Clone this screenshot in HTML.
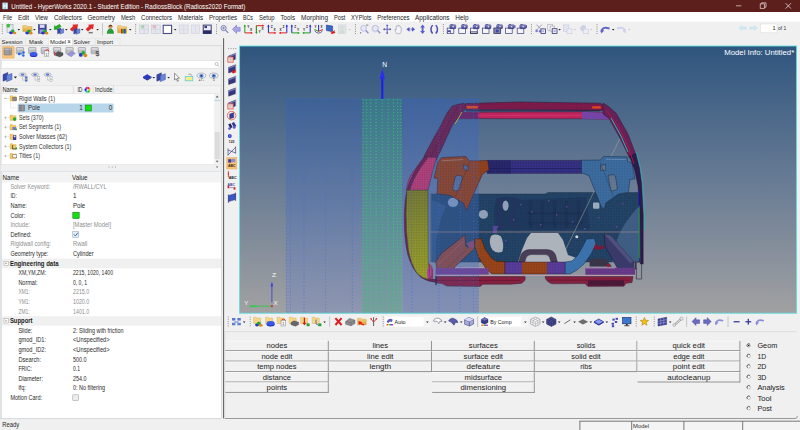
<!DOCTYPE html>
<html lang="en">
<head>
<meta charset="utf-8">
<title>Untitled - HyperWorks 2020.1 - Student Edition - RadiossBlock (Radioss2020 Format)</title>
<style>
html,body{margin:0;padding:0;background:#f0f0f0;overflow:hidden;}
body{width:800px;height:430px;font-family:"Liberation Sans",sans-serif;}
svg{display:block;font-family:"Liberation Sans",sans-serif;}
svg text{white-space:pre;}
</style>
</head>
<body>
<svg width="800" height="430" viewBox="0 0 800 430">
<defs>
<linearGradient id="vpbg" x1="0" y1="0" x2="0" y2="1"><stop offset="0" stop-color="#2f557e"/><stop offset="0.5" stop-color="#677b94"/><stop offset="1" stop-color="#a1a1a2"/></linearGradient>
<linearGradient id="wallg" x1="0" y1="0" x2="0" y2="1"><stop offset="0" stop-color="#3a5f9c"/><stop offset="0.5" stop-color="#5a77ad"/><stop offset="1" stop-color="#8490b9"/></linearGradient>
<linearGradient id="cylg" x1="0" y1="0" x2="0" y2="1"><stop offset="0" stop-color="#3a8a84"/><stop offset="0.5" stop-color="#4f9c8c"/><stop offset="1" stop-color="#62a68e"/></linearGradient>
<linearGradient id="fold" x1="0" y1="0" x2="0" y2="1"><stop offset="0" stop-color="#f7d88a"/><stop offset="1" stop-color="#e0a030"/></linearGradient>
<linearGradient id="blu" x1="0" y1="0" x2="1" y2="1"><stop offset="0" stop-color="#8a90d8"/><stop offset="1" stop-color="#2a2f8a"/></linearGradient>
<linearGradient id="cam" x1="0" y1="0" x2="0" y2="1"><stop offset="0" stop-color="#9a9cd8"/><stop offset="1" stop-color="#34388a"/></linearGradient>
<pattern id="mesh" width="1.6" height="1.6" patternUnits="userSpaceOnUse"><path d="M0 0H1.6M0 0V1.6" stroke="#000" stroke-width="0.4" opacity="0.4"/></pattern>
<pattern id="meshl" width="1.8" height="1.8" patternUnits="userSpaceOnUse"><path d="M0 0H1.8M0 0V1.8" stroke="#fff" stroke-width="0.35" opacity="0.35"/></pattern>
</defs>
<rect x="0" y="0" width="800" height="430" fill="#f0f0f0" />
<rect x="0" y="0" width="800" height="12" fill="#5c1f1b" />
<rect x="2.2" y="2.6" width="5.8" height="6.6" fill="#9cc4e4" rx="0.8" />
<rect x="3.3" y="3.2" width="1" height="5.4" fill="#ffffff" />
<rect x="5.9" y="3.2" width="1" height="5.4" fill="#ffffff" />
<rect x="3.3" y="5.3" width="3.6" height="1.1" fill="#ffffff" />
<text x="11.3" y="8.58" font-size="7.3" fill="#ffffff" textLength="234" lengthAdjust="spacingAndGlyphs">Untitled - HyperWorks 2020.1 - Student Edition - RadiossBlock (Radioss2020 Format)</text>
<line x1="736" y1="5.8" x2="741.4" y2="5.8" stroke="#e8dcdc" stroke-width="0.7" />
<rect x="760.2" y="3.9" width="4.4" height="4.4" fill="none" stroke="#e8dcdc" stroke-width="0.7" />
<path d="M761.6 3.9V2.8H766V7.2H764.6" fill="none" stroke="#e8dcdc" stroke-width="0.7" />
<path d="M785.6 3.2L791 8.6M791 3.2L785.6 8.6" fill="none" stroke="#f0e6e6" stroke-width="0.75" />
<rect x="0" y="12" width="800" height="9.7" fill="#ffffff" />
<text x="3" y="19.58" font-size="6.4" fill="#1c1c1c" textLength="9" lengthAdjust="spacingAndGlyphs">File</text>
<text x="18" y="19.58" font-size="6.4" fill="#1c1c1c" textLength="11" lengthAdjust="spacingAndGlyphs">Edit</text>
<text x="35" y="19.58" font-size="6.4" fill="#1c1c1c" textLength="13" lengthAdjust="spacingAndGlyphs">View</text>
<text x="54" y="19.58" font-size="6.4" fill="#1c1c1c" textLength="28" lengthAdjust="spacingAndGlyphs">Collectors</text>
<text x="87.5" y="19.58" font-size="6.4" fill="#1c1c1c" textLength="27.5" lengthAdjust="spacingAndGlyphs">Geometry</text>
<text x="121" y="19.58" font-size="6.4" fill="#1c1c1c" textLength="14.3" lengthAdjust="spacingAndGlyphs">Mesh</text>
<text x="141" y="19.58" font-size="6.4" fill="#1c1c1c" textLength="31" lengthAdjust="spacingAndGlyphs">Connectors</text>
<text x="178" y="19.58" font-size="6.4" fill="#1c1c1c" textLength="25" lengthAdjust="spacingAndGlyphs">Materials</text>
<text x="209" y="19.58" font-size="6.4" fill="#1c1c1c" textLength="28.2" lengthAdjust="spacingAndGlyphs">Properties</text>
<text x="243" y="19.58" font-size="6.4" fill="#1c1c1c" textLength="10" lengthAdjust="spacingAndGlyphs">BCs</text>
<text x="259" y="19.58" font-size="6.4" fill="#1c1c1c" textLength="15.5" lengthAdjust="spacingAndGlyphs">Setup</text>
<text x="280.5" y="19.58" font-size="6.4" fill="#1c1c1c" textLength="14.5" lengthAdjust="spacingAndGlyphs">Tools</text>
<text x="301" y="19.58" font-size="6.4" fill="#1c1c1c" textLength="27" lengthAdjust="spacingAndGlyphs">Morphing</text>
<text x="334" y="19.58" font-size="6.4" fill="#1c1c1c" textLength="11.3" lengthAdjust="spacingAndGlyphs">Post</text>
<text x="351" y="19.58" font-size="6.4" fill="#1c1c1c" textLength="20.5" lengthAdjust="spacingAndGlyphs">XYPlots</text>
<text x="377.3" y="19.58" font-size="6.4" fill="#1c1c1c" textLength="32.2" lengthAdjust="spacingAndGlyphs">Preferences</text>
<text x="415" y="19.58" font-size="6.4" fill="#1c1c1c" textLength="34.5" lengthAdjust="spacingAndGlyphs">Applications</text>
<text x="455.3" y="19.58" font-size="6.4" fill="#1c1c1c" textLength="13.2" lengthAdjust="spacingAndGlyphs">Help</text>
<rect x="1.85" y="24.2" width="0.9" height="0.9" fill="#7a7a7a" />
<rect x="1.85" y="26.4" width="0.9" height="0.9" fill="#7a7a7a" />
<rect x="1.85" y="28.6" width="0.9" height="0.9" fill="#7a7a7a" />
<rect x="1.85" y="30.8" width="0.9" height="0.9" fill="#7a7a7a" />
<rect x="1.85" y="33" width="0.9" height="0.9" fill="#7a7a7a" />
<rect x="7" y="24.7" width="6" height="8" fill="#e6e8f2" stroke="#8890a8" stroke-width="0.5" />
<circle cx="8.3" cy="25.7" r="1.9" fill="#3cc03c"/>
<ellipse cx="11.015" cy="32.8" rx="1.955" ry="1.445" fill="#2238c8"/>
<ellipse cx="14.5" cy="33" rx="1.87" ry="1.36" fill="#d88a18"/>
<ellipse cx="12.715" cy="30.9" rx="1.87" ry="1.36" fill="#22a832"/>
<polygon points="17.5,28.95 20.1,28.95 18.8,30.51" fill="#222" />
<path d="M22.8 25.6h3.6799999999999997l1 1h4.52v5h-9.2z" fill="url(#fold)" stroke="#c8922a" stroke-width="0.4" />
<ellipse cx="27.215" cy="33" rx="1.955" ry="1.445" fill="#2238c8"/>
<ellipse cx="30.7" cy="33.2" rx="1.87" ry="1.36" fill="#d88a18"/>
<ellipse cx="28.915" cy="31.1" rx="1.87" ry="1.36" fill="#22a832"/>
<polygon points="33.1,28.95 35.7,28.95 34.4,30.51" fill="#222" />
<rect x="38.4" y="24.7" width="7.8" height="8.6" fill="#3c3f96" stroke="#22246a" stroke-width="0.4" />
<rect x="39.8" y="24.7" width="4.8" height="3.2" fill="#d8dcf2" />
<rect x="39.6" y="29.5" width="5.4" height="3.6" fill="#9a9edc" />
<ellipse cx="43.015" cy="33" rx="1.955" ry="1.445" fill="#2238c8"/>
<ellipse cx="46.5" cy="33.2" rx="1.87" ry="1.36" fill="#d88a18"/>
<ellipse cx="44.715" cy="31.1" rx="1.87" ry="1.36" fill="#22a832"/>
<polygon points="49,28.95 51.6,28.95 50.3,30.51" fill="#222" />
<polygon points="53.8,29.7 54.4,25.1 55.8,26.3 59.4,24.1 61.6,26.5 58.2,28.5 59.4,29.7" fill="#2aa82a" />
<g>
<polygon points="57.6,29.36 60.82,27.96 60.82,32.58 57.6,33.84" fill="#3a48a8" stroke="#222a78" stroke-width="0.4" />
<polygon points="59.98,29.92 63.62,28.66 63.62,32.72 59.98,34.12" fill="#6a86d8" stroke="#2a3a98" stroke-width="0.4" />
</g>
<polygon points="65,28.95 67.6,28.95 66.3,30.51" fill="#222" />
<polygon points="69.8,29.2 73.2,26 72.2,24.8 78,24.2 77.2,29.6 75.8,28.4 72.2,31.6" fill="#e02a2a" />
<g>
<polygon points="73.8,29.56 77.02,28.16 77.02,32.78 73.8,34.04" fill="#3a48a8" stroke="#222a78" stroke-width="0.4" />
<polygon points="76.18,30.12 79.82,28.86 79.82,32.92 76.18,34.32" fill="#6a86d8" stroke="#2a3a98" stroke-width="0.4" />
</g>
<polygon points="80.9,28.95 83.5,28.95 82.2,30.51" fill="#222" />
<polygon points="85.6,29.2 89,26 88,24.8 93.8,24.2 93,29.6 91.6,28.4 88,31.6" fill="#e02a2a" />
<rect x="88.6" y="31.9" width="4.2" height="1.5" fill="#7a7a7a" />
<polygon points="96.3,28.95 98.9,28.95 97.6,30.51" fill="#222" />
<line x1="102.5" y1="23.3" x2="102.5" y2="35.4" stroke="#a8a8a8" stroke-width="0.6" />
<circle cx="110.4" cy="26.9" r="2.1" fill="#d09a6a"/>
<path d="M106.8 33.7q0.2 -5 3.6 -5q3.4 0 3.6 5z" fill="#2a9a3a" />
<path d="M108.6 26.3q1.8 -2.6 3.8 0" fill="#5a3418" stroke="#5a3418" stroke-width="0.6" />
<path d="M117.6 25.7h3.6l1 1h4.3999999999999995v6h-9z" fill="url(#fold)" stroke="#c8922a" stroke-width="0.4" />
<rect x="121" y="28.9" width="1.6" height="4.6" fill="#e02020" />
<rect x="122.6" y="28.9" width="1.6" height="4.6" fill="#20b020" />
<rect x="124.2" y="28.9" width="1.6" height="4.6" fill="#2030d0" />
<rect x="125.8" y="28.9" width="1.2" height="4.6" fill="#e0c020" />
<polygon points="128.9,28.95 131.5,28.95 130.2,30.51" fill="#222" />
<rect x="135.25" y="24.2" width="0.9" height="0.9" fill="#7a7a7a" />
<rect x="135.25" y="26.4" width="0.9" height="0.9" fill="#7a7a7a" />
<rect x="135.25" y="28.6" width="0.9" height="0.9" fill="#7a7a7a" />
<rect x="135.25" y="30.8" width="0.9" height="0.9" fill="#7a7a7a" />
<rect x="135.25" y="33" width="0.9" height="0.9" fill="#7a7a7a" />
<rect x="139.6" y="25" width="9" height="8.6" fill="#e6e7ee" stroke="#c4c8d4" stroke-width="0.6" opacity="1" />
<line x1="144.1" y1="25" x2="144.1" y2="33.6" stroke="#c4c8d4" stroke-width="0.5" />
<line x1="139.6" y1="29.3" x2="148.6" y2="29.3" stroke="#c4c8d4" stroke-width="0.5" />
<rect x="141" y="25.3" width="3" height="3" fill="#78c878" opacity="0.55" />
<rect x="151.2" y="25" width="9" height="8.6" fill="#e6e7ee" stroke="#c4c8d4" stroke-width="0.6" opacity="1" />
<line x1="155.7" y1="25" x2="155.7" y2="33.6" stroke="#c4c8d4" stroke-width="0.5" />
<line x1="151.2" y1="29.3" x2="160.2" y2="29.3" stroke="#c4c8d4" stroke-width="0.5" />
<rect x="152.6" y="25.3" width="3" height="3" fill="#e88a8a" opacity="0.55" />
<rect x="163.2" y="25.3" width="8.4" height="8.2" fill="#ffffff" stroke="#4a4c86" stroke-width="1.1" />
<polygon points="173.9,28.95 176.5,28.95 175.2,30.51" fill="#222" />
<rect x="179.2" y="25" width="9" height="8.6" fill="#e6e7ee" stroke="#cdd0dc" stroke-width="0.6" opacity="1" />
<line x1="183.7" y1="25" x2="183.7" y2="33.6" stroke="#cdd0dc" stroke-width="0.5" />
<line x1="179.2" y1="29.3" x2="188.2" y2="29.3" stroke="#cdd0dc" stroke-width="0.5" />
<rect x="191.2" y="25" width="8.4" height="8.6" fill="#e6e7ee" stroke="#cdd0dc" stroke-width="0.6" />
<line x1="195.4" y1="25" x2="195.4" y2="33.6" stroke="#cdd0dc" stroke-width="0.5" />
<rect x="203.2" y="25.1" width="8" height="8.4" fill="#e8eaf4" stroke="#2a2c66" stroke-width="0.9" />
<rect x="203.2" y="30.3" width="8" height="3.2" fill="#2a2c66" />
<rect x="204.4" y="25.9" width="2.6" height="2.2" fill="#3a3c7a" />
<rect x="216.05" y="24.2" width="0.9" height="0.9" fill="#7a7a7a" />
<rect x="216.05" y="26.4" width="0.9" height="0.9" fill="#7a7a7a" />
<rect x="216.05" y="28.6" width="0.9" height="0.9" fill="#7a7a7a" />
<rect x="216.05" y="30.8" width="0.9" height="0.9" fill="#7a7a7a" />
<rect x="216.05" y="33" width="0.9" height="0.9" fill="#7a7a7a" />
<circle cx="223.6" cy="28.1" r="2.6" fill="#dfe2f2" stroke="#6a6eae" stroke-width="0.8"/>
<line x1="225.6" y1="30.1" x2="228.2" y2="32.9" stroke="#7a7ec0" stroke-width="1.2" />
<path d="M222.3 28.1h2.6M223.6 26.8v2.6" fill="none" stroke="#4a4e96" stroke-width="0.5" />
<polygon points="232.4,29.3 236.6,25.1 236.6,27.4 240.2,27.4 240.2,31.2 236.6,31.2 236.6,33.5" fill="#a8a6e6" stroke="#6a68c0" stroke-width="0.5" />
<line x1="244.8" y1="32.9" x2="244.8" y2="25.5" stroke="#20a020" stroke-width="1" />
<polygon points="244.8,24.5 243.6,26.5 246,26.5" fill="#20a020" />
<line x1="244.8" y1="32.9" x2="251.8" y2="32.9" stroke="#e02020" stroke-width="1" />
<polygon points="252.8,32.9 250.8,31.7 250.8,34.1" fill="#e02020" />
<text x="247.2" y="27.79" font-size="3.2" fill="#222" font-weight="bold">Y</text>
<text x="250" y="31.39" font-size="3.2" fill="#222" font-weight="bold">X</text>
<path d="M256.4 31.900000000000002V25.7H263" fill="none" stroke="#e02020" stroke-width="1" />
<polygon points="264.4,25.7 262.4,24.5 262.4,26.9" fill="#e02020" />
<polygon points="256.4,34.1 255.2,31.9 257.6,31.9" fill="#20a020" />
<line x1="256.4" y1="25.7" x2="256.4" y2="32.3" stroke="#20a020" stroke-width="1" />
<text x="261.4" y="29.79" font-size="3.2" fill="#222" font-weight="bold">X</text>
<text x="258.6" y="33.39" font-size="3.2" fill="#222" font-weight="bold">Y</text>
<line x1="268.4" y1="32.9" x2="268.4" y2="25.5" stroke="#2020e0" stroke-width="1" />
<polygon points="268.4,24.5 267.2,26.5 269.6,26.5" fill="#2020e0" />
<line x1="268.4" y1="32.9" x2="275.4" y2="32.9" stroke="#e02020" stroke-width="1" />
<polygon points="276.4,32.9 274.4,31.7 274.4,34.1" fill="#e02020" />
<text x="270.8" y="27.79" font-size="3.2" fill="#222" font-weight="bold">Z</text>
<text x="273.6" y="31.39" font-size="3.2" fill="#222" font-weight="bold">X</text>
<line x1="286.8" y1="32.9" x2="286.8" y2="25.5" stroke="#2020e0" stroke-width="1" />
<polygon points="286.8,24.5 285.6,26.5 288,26.5" fill="#2020e0" />
<line x1="286.8" y1="32.9" x2="279.8" y2="32.9" stroke="#e02020" stroke-width="1" />
<polygon points="278.8,32.9 280.8,31.7 280.8,34.1" fill="#e02020" />
<text x="282.6" y="27.79" font-size="3.2" fill="#222" font-weight="bold">Z</text>
<text x="279.6" y="31.39" font-size="3.2" fill="#222" font-weight="bold">X</text>
<line x1="291.8" y1="32.9" x2="291.8" y2="25.5" stroke="#2020e0" stroke-width="1" />
<polygon points="291.8,24.5 290.6,26.5 293,26.5" fill="#2020e0" />
<line x1="291.8" y1="32.9" x2="298.8" y2="32.9" stroke="#20a020" stroke-width="1" />
<polygon points="299.8,32.9 297.8,31.7 297.8,34.1" fill="#20a020" />
<text x="294.2" y="27.79" font-size="3.2" fill="#222" font-weight="bold">Z</text>
<text x="297" y="31.39" font-size="3.2" fill="#222" font-weight="bold">Y</text>
<line x1="310.2" y1="32.9" x2="310.2" y2="25.5" stroke="#2020e0" stroke-width="1" />
<polygon points="310.2,24.5 309,26.5 311.4,26.5" fill="#2020e0" />
<line x1="310.2" y1="32.9" x2="303.2" y2="32.9" stroke="#20a020" stroke-width="1" />
<polygon points="302.2,32.9 304.2,31.7 304.2,34.1" fill="#20a020" />
<text x="306" y="27.79" font-size="3.2" fill="#222" font-weight="bold">Z</text>
<text x="303" y="31.39" font-size="3.2" fill="#222" font-weight="bold">Y</text>
<line x1="318.6" y1="24.9" x2="318.6" y2="31.3" stroke="#2020e0" stroke-width="1" />
<line x1="318.6" y1="31.3" x2="314.4" y2="29.5" stroke="#20a020" stroke-width="1" />
<line x1="318.6" y1="31.3" x2="322.8" y2="29.5" stroke="#e02020" stroke-width="1" />
<path d="M314.6 30.900000000000002q4 4.4 8 0" fill="none" stroke="#22226a" stroke-width="0.7" />
<text x="314.6" y="27.72" font-size="3" fill="#222" font-weight="bold">Y</text>
<text x="320.6" y="27.72" font-size="3" fill="#222" font-weight="bold">X</text>
<polygon points="326.4,25.1 332.6,26.1 332.6,31.7 326.4,30.5" fill="#3a68c8" stroke="#1a2a7a" stroke-width="0.5" />
<polygon points="330.4,33.1 335.2,29.9 334.4,31.7 335.6,32.7 332,33.9" fill="#e01818" />
<rect x="338.2" y="24.9" width="7.8" height="8.8" fill="#dfe3ea" stroke="#cfd4dc" stroke-width="0.5" />
<circle cx="342" cy="27.9" r="1.6" fill="#cfe0cf"/>
<path d="M339.4 33.3q0.4 -3.6 2.6 -3.6q2.2 0 2.6 3.6z" fill="#cfe0cf" />
<polygon points="348.6,29.1 350.6,29.1 349.6,30.3" fill="#b8b8b8" />
<rect x="354.95" y="24.2" width="0.9" height="0.9" fill="#7a7a7a" />
<rect x="354.95" y="26.4" width="0.9" height="0.9" fill="#7a7a7a" />
<rect x="354.95" y="28.6" width="0.9" height="0.9" fill="#7a7a7a" />
<rect x="354.95" y="30.8" width="0.9" height="0.9" fill="#7a7a7a" />
<rect x="354.95" y="33" width="0.9" height="0.9" fill="#7a7a7a" />
<circle cx="363.6" cy="28.3" r="2.9" fill="#e6e8f6" stroke="#b9bbe2" stroke-width="0.9"/>
<line x1="365.8" y1="30.5" x2="368.4" y2="33.3" stroke="#8c8ed0" stroke-width="1.3" />
<polygon points="360,32.5 361.4,32.5 360.7,33.7" fill="#222" />
<line x1="366" y1="25.1" x2="368.4" y2="25.1" stroke="#444" stroke-width="0.6" />
<circle cx="375" cy="28.7" r="3.4" fill="none" stroke="#c4c6dc" stroke-width="0.6"/>
<circle cx="375.4" cy="28.3" r="2.9" fill="#e6e8f6" stroke="#b9bbe2" stroke-width="0.9"/>
<line x1="377.6" y1="30.5" x2="380.2" y2="33.3" stroke="#8c8ed0" stroke-width="1.3" />
<path d="M383.4 29.3H391M387.2 24.9V33.7" fill="none" stroke="#5a5cb8" stroke-width="0.9" />
<polygon points="387.2,24.3 386,26.1 388.4,26.1" fill="#5a5cb8" />
<polygon points="387.2,34.3 386,32.5 388.4,32.5" fill="#5a5cb8" />
<polygon points="383,29.3 384.8,28.1 384.8,30.5" fill="#5a5cb8" />
<polygon points="391.4,29.3 389.6,28.1 389.6,30.5" fill="#5a5cb8" />
<path d="M396.6 33.7q-1.8 -2.6 -1.6 -4.6l1.2 0.6v-3.4q0.6 -0.8 1.2 0v-0.8q0.7 -0.8 1.3 0v0.6q0.7 -0.7 1.3 0.1v1q0.7 -0.5 1.2 0.3v3.4q0 1.6 -1 2.8z" fill="#f4f4f8" stroke="#8a8ca6" stroke-width="0.55" />
<polygon points="406.4,29.3 409.4,26.9 409.4,28.4 412,28.4 412,26.9 415.2,29.3 412,31.7 412,30.2 409.4,30.2 409.4,31.7" fill="#5a5cc4" />
<circle cx="410.6" cy="29.3" r="1" fill="#d8d8f4"/>
<polygon points="422.6,24.5 425,27.5 423.5,27.5 423.5,31.1 425,31.1 422.6,34.1 420.2,31.1 421.7,31.1 421.7,27.5 420.2,27.5" fill="#5a5cc4" />
<path d="M432.6 25.1q-3.4 4.2 0 8.4" fill="none" stroke="#4a4cb4" stroke-width="1.5" />
<path d="M435.8 25.1q3.4 4.2 0 8.4" fill="none" stroke="#4a4cb4" stroke-width="1.5" />
<rect x="442.95" y="24.2" width="0.9" height="0.9" fill="#7a7a7a" />
<rect x="442.95" y="26.4" width="0.9" height="0.9" fill="#7a7a7a" />
<rect x="442.95" y="28.6" width="0.9" height="0.9" fill="#7a7a7a" />
<rect x="442.95" y="30.8" width="0.9" height="0.9" fill="#7a7a7a" />
<rect x="442.95" y="33" width="0.9" height="0.9" fill="#7a7a7a" />
<rect x="447.2" y="28.1" width="6.6" height="5.4" fill="#f4f4fa" stroke="#3c3e78" stroke-width="0.7" />
<rect x="449.8" y="24.7" width="6" height="4" fill="url(#cam)" stroke="#34367c" stroke-width="0.4" rx="0.8" />
<circle cx="453.2" cy="26.7" r="1.15" fill="#e4e4f8" stroke="#2a2c6a" stroke-width="0.4"/>
<rect x="450.6" y="24" width="2" height="1" fill="#5a5ca8" />
<rect x="447.4" y="30.3" width="3.4" height="3.2" fill="#3c3e9a" />
<rect x="448.1" y="31.9" width="2" height="1.4" fill="#e8e8f8" />
<rect x="458.8" y="28.1" width="6.6" height="5.4" fill="#f4f4fa" stroke="#3c3e78" stroke-width="0.7" />
<rect x="461.4" y="24.7" width="6" height="4" fill="url(#cam)" stroke="#34367c" stroke-width="0.4" rx="0.8" />
<circle cx="464.8" cy="26.7" r="1.15" fill="#e4e4f8" stroke="#2a2c6a" stroke-width="0.4"/>
<rect x="462.2" y="24" width="2" height="1" fill="#5a5ca8" />
<rect x="470.6" y="28.1" width="6.6" height="5.4" fill="#f4f4fa" stroke="#3c3e78" stroke-width="0.7" />
<rect x="473.2" y="24.7" width="6" height="4" fill="url(#cam)" stroke="#34367c" stroke-width="0.4" rx="0.8" />
<circle cx="476.6" cy="26.7" r="1.15" fill="#e4e4f8" stroke="#2a2c6a" stroke-width="0.4"/>
<rect x="474" y="24" width="2" height="1" fill="#5a5ca8" />
<rect x="470.6" y="31.9" width="6.6" height="1.6" fill="#f4f4fa" stroke="#22244a" stroke-width="0.8" />
<rect x="482.4" y="28.1" width="6.6" height="5.4" fill="#f4f4fa" stroke="#3c3e78" stroke-width="0.7" />
<rect x="485" y="24.7" width="6" height="4" fill="url(#cam)" stroke="#34367c" stroke-width="0.4" rx="0.8" />
<circle cx="488.4" cy="26.7" r="1.15" fill="#e4e4f8" stroke="#2a2c6a" stroke-width="0.4"/>
<rect x="485.8" y="24" width="2" height="1" fill="#5a5ca8" />
<rect x="494" y="28.1" width="6.6" height="5.4" fill="#f4f4fa" stroke="#3c3e78" stroke-width="0.7" />
<rect x="496.6" y="24.7" width="6" height="4" fill="url(#cam)" stroke="#34367c" stroke-width="0.4" rx="0.8" />
<circle cx="500" cy="26.7" r="1.15" fill="#e4e4f8" stroke="#2a2c6a" stroke-width="0.4"/>
<rect x="497.4" y="24" width="2" height="1" fill="#5a5ca8" />
<rect x="494" y="28.1" width="6.6" height="5.4" fill="#8a8ca8" stroke="#3c3e78" stroke-width="0.7" />
<circle cx="497.3" cy="30.9" r="1.6" fill="#3a48b8"/>
<rect x="505.6" y="28.1" width="6.6" height="5.4" fill="#f4f4fa" stroke="#3c3e78" stroke-width="0.7" />
<rect x="508.2" y="24.7" width="6" height="4" fill="url(#cam)" stroke="#34367c" stroke-width="0.4" rx="0.8" />
<circle cx="511.6" cy="26.7" r="1.15" fill="#e4e4f8" stroke="#2a2c6a" stroke-width="0.4"/>
<rect x="509" y="24" width="2" height="1" fill="#5a5ca8" />
<polygon points="514.2,25.7 515.4,24.9 515.4,28.3 514.2,27.5" fill="#4a4c98" />
<rect x="517.2" y="28.1" width="6.6" height="5.4" fill="#f4f4fa" stroke="#3c3e78" stroke-width="0.7" />
<rect x="519.8" y="24.7" width="6" height="4" fill="url(#cam)" stroke="#34367c" stroke-width="0.4" rx="0.8" />
<circle cx="523.2" cy="26.7" r="1.15" fill="#e4e4f8" stroke="#2a2c6a" stroke-width="0.4"/>
<rect x="520.6" y="24" width="2" height="1" fill="#5a5ca8" />
<polygon points="525.8,25.7 527,24.9 527,28.3 525.8,27.5" fill="#4a4c98" />
<rect x="530.95" y="24.2" width="0.9" height="0.9" fill="#7a7a7a" />
<rect x="530.95" y="26.4" width="0.9" height="0.9" fill="#7a7a7a" />
<rect x="530.95" y="28.6" width="0.9" height="0.9" fill="#7a7a7a" />
<rect x="530.95" y="30.8" width="0.9" height="0.9" fill="#7a7a7a" />
<rect x="530.95" y="33" width="0.9" height="0.9" fill="#7a7a7a" />
<path d="M536.6 24.700000000000003L541.6 29.900000000000002M541.8 24.700000000000003L536.8 29.900000000000002" fill="none" stroke="#9a9cb6" stroke-width="0.9" />
<circle cx="536.6" cy="30.9" r="1.3" fill="#7a7cd0"/>
<circle cx="540" cy="31.3" r="1.2" fill="#7a7cd0"/>
<rect x="541" y="28.9" width="4.4" height="4.6" fill="#f0f0fa" stroke="#34366e" stroke-width="0.8" />
<rect x="542.4" y="30.3" width="1.8" height="1.8" fill="#a8aae0" />
<rect x="547.8" y="24.5" width="4.6" height="6" fill="#f4f4f8" stroke="#9a9ca8" stroke-width="0.5" />
<rect x="550" y="26.1" width="4.2" height="5" fill="#f4f4f8" stroke="#8a8c98" stroke-width="0.5" />
<rect x="552.2" y="28.7" width="4.8" height="4.8" fill="#f0f0fa" stroke="#34366e" stroke-width="0.8" />
<rect x="553.6" y="30.1" width="2" height="2" fill="#a8aae0" />
<polygon points="558.3,28.95 560.9,28.95 559.6,30.51" fill="#222" />
<rect x="563.4" y="24.9" width="5.4" height="6.4" fill="#e2e4f0" stroke="#c8cade" stroke-width="0.6" />
<rect x="567" y="28.9" width="5" height="4.8" fill="#eceef6" stroke="#c8cade" stroke-width="0.6" />
<polygon points="574.2,29.1 576.2,29.1 575.2,30.3" fill="#bcbcbc" />
<path d="M579.6 27.7l3.4 -3 3 1.2 -0.4 4 -4 1.6z" fill="#cfd1e4" />
<rect x="583.4" y="29.1" width="5" height="4.6" fill="#eceef6" stroke="#c8cade" stroke-width="0.6" />
<polygon points="590.2,29.1 592.2,29.1 591.2,30.3" fill="#bcbcbc" />
<rect x="596.55" y="24.2" width="0.9" height="0.9" fill="#7a7a7a" />
<rect x="596.55" y="26.4" width="0.9" height="0.9" fill="#7a7a7a" />
<rect x="596.55" y="28.6" width="0.9" height="0.9" fill="#7a7a7a" />
<rect x="596.55" y="30.8" width="0.9" height="0.9" fill="#7a7a7a" />
<rect x="596.55" y="33" width="0.9" height="0.9" fill="#7a7a7a" />
<path d="M601.4 32.1q0.4 -6.4 8.2 -3.4" fill="none" stroke="#6466c4" stroke-width="1.8" />
<polygon points="600.6,29.5 604.4,30.5 601.2,33.5" fill="#6466c4" />
<polygon points="611.9,28.95 614.5,28.95 613.2,30.51" fill="#222" />
<path d="M625.2 32.1q-0.4 -6.4 -8.2 -3.4" fill="none" stroke="#d2d3ec" stroke-width="1.8" />
<polygon points="626,29.5 622.2,30.5 625.4,33.5" fill="#d2d3ec" />
<polygon points="628.2,29.1 630.2,29.1 629.2,30.3" fill="#bcbcbc" />
<polygon points="738.2,28.1 742.2,25.1 742.2,26.7 746.8,26.7 746.8,29.5 742.2,29.5 742.2,31.1" fill="#cfe6ee" />
<polygon points="758,28.1 754,25.1 754,26.7 749.4,26.7 749.4,29.5 754,29.5 754,31.1" fill="#cfe6ee" />
<rect x="760.4" y="24" width="16.6" height="8.8" fill="#ffffff" stroke="#dcdcdc" stroke-width="0.6" />
<text x="775.6" y="30.40" font-size="5.6" fill="#222" text-anchor="end">1</text>
<text x="778" y="30.34" font-size="5.4" fill="#333" textLength="8.4" lengthAdjust="spacingAndGlyphs">of 1</text>
<rect x="0" y="38.2" width="25.5" height="7.4" fill="#f0f0f0" stroke="#e0e0e0" stroke-width="0.5" />
<text x="1.5" y="44.01" font-size="6.2" fill="#1e1e1e" textLength="21" lengthAdjust="spacingAndGlyphs">Session</text>
<rect x="25.5" y="38.2" width="23.3" height="7.4" fill="#f0f0f0" stroke="#e0e0e0" stroke-width="0.5" />
<text x="29" y="44.01" font-size="6.2" fill="#1e1e1e" textLength="14" lengthAdjust="spacingAndGlyphs">Mask</text>
<rect x="48.8" y="38.2" width="23.8" height="7.4" fill="#ffffff" stroke="#e0e0e0" stroke-width="0.5" />
<text x="50" y="44.01" font-size="6.2" fill="#1e1e1e" textLength="16" lengthAdjust="spacingAndGlyphs">Model</text>
<rect x="72.6" y="38.2" width="22.8" height="7.4" fill="#f0f0f0" stroke="#e0e0e0" stroke-width="0.5" />
<text x="73.6" y="44.01" font-size="6.2" fill="#1e1e1e" textLength="16.4" lengthAdjust="spacingAndGlyphs">Solver</text>
<rect x="95.4" y="38.2" width="24.6" height="7.4" fill="#f0f0f0" stroke="#e0e0e0" stroke-width="0.5" />
<text x="97" y="44.01" font-size="6.2" fill="#1e1e1e" textLength="16" lengthAdjust="spacingAndGlyphs">Import</text>
<text x="67.2" y="44.08" font-size="6.4" fill="#222" textLength="3.6" lengthAdjust="spacingAndGlyphs">×</text>
<rect x="0.6" y="45.6" width="220.6" height="372.6" fill="none" stroke="#dadada" stroke-width="0.6" />
<line x1="0" y1="45.6" x2="221" y2="45.6" stroke="#d4d4d4" stroke-width="0.6" />
<rect x="2.2" y="46.6" width="12" height="11.6" fill="#f6c27c" stroke="#e8a858" stroke-width="0.5" rx="0.6" />
<rect x="4" y="48.2" width="7.6" height="6.8" fill="#9c9ca0" stroke="#707076" stroke-width="0.5" rx="0.6" />
<rect x="4.4" y="48.6" width="6.8" height="1.2" fill="#c4c4c8" />
<line x1="9.4" y1="48.4" x2="9.4" y2="55" stroke="#7c7c82" stroke-width="0.5" />
<rect x="16.2" y="47.5" width="7.4" height="6.2" fill="#bdbdc4" stroke="#8c8c96" stroke-width="0.5" rx="0.6" />
<rect x="16.9" y="48.1" width="6" height="1.5" fill="#dedee4" />
<line x1="21.2" y1="49.7" x2="21.2" y2="53.5" stroke="#9c9ca6" stroke-width="0.4" />
<circle cx="19.2" cy="53.9" r="1.3" fill="#2a6ae0"/>
<circle cx="23.6" cy="52.5" r="1.2" fill="#2a6ae0"/>
<circle cx="23.4" cy="55.5" r="1.2" fill="#2a6ae0"/>
<path d="M19.2 53.9L23.6 52.5M19.2 53.9L23.4 55.5" fill="none" stroke="#2a6ae0" stroke-width="0.5" />
<rect x="28.6" y="47.5" width="7.4" height="6.2" fill="#bdbdc4" stroke="#8c8c96" stroke-width="0.5" rx="0.6" />
<rect x="29.3" y="48.1" width="6" height="1.5" fill="#dedee4" />
<line x1="33.6" y1="49.7" x2="33.6" y2="53.5" stroke="#9c9ca6" stroke-width="0.4" />
<ellipse cx="33.6" cy="54.9" rx="3.8" ry="2.1" fill="#2030c8"/>
<ellipse cx="33.6" cy="54.1" rx="3.8" ry="2.1" fill="#3a58e8"/>
<rect x="41.2" y="47.5" width="7.4" height="6.2" fill="#bdbdc4" stroke="#8c8c96" stroke-width="0.5" rx="0.6" />
<rect x="41.9" y="48.1" width="6" height="1.5" fill="#dedee4" />
<line x1="46.2" y1="49.7" x2="46.2" y2="53.5" stroke="#9c9ca6" stroke-width="0.4" />
<rect x="44.4" y="50.9" width="4.4" height="5.8" fill="#f6f6f8" stroke="#777" stroke-width="0.4" />
<path d="M45.4 50.5q2.4 -1.8 3.8 0.6" fill="none" stroke="#e02020" stroke-width="0.9" />
<text x="45.6" y="55.72" font-size="3.6" fill="#333">1</text>
<rect x="53.4" y="47.5" width="7.4" height="6.2" fill="#bdbdc4" stroke="#8c8c96" stroke-width="0.5" rx="0.6" />
<rect x="54.1" y="48.1" width="6" height="1.5" fill="#dedee4" />
<line x1="58.4" y1="49.7" x2="58.4" y2="53.5" stroke="#9c9ca6" stroke-width="0.4" />
<polygon points="55.4,53.3 58.4,51.5 63,52.9 63,55.3 60,56.9 55.4,55.5" fill="#55555a" stroke="#333" stroke-width="0.3" />
<rect x="54.2" y="51.7" width="0.9" height="3.8" fill="#d02020" />
<rect x="65.8" y="47.5" width="7.4" height="6.2" fill="#bdbdc4" stroke="#8c8c96" stroke-width="0.5" rx="0.6" />
<rect x="66.5" y="48.1" width="6" height="1.5" fill="#dedee4" />
<line x1="70.8" y1="49.7" x2="70.8" y2="53.5" stroke="#9c9ca6" stroke-width="0.4" />
<polygon points="67.4,54.5 71.8,51.5 75.4,53.3 71,56.7" fill="#9a96dc" stroke="#6a66b8" stroke-width="0.4" />
<rect x="78.2" y="47.5" width="7.4" height="6.2" fill="#bdbdc4" stroke="#8c8c96" stroke-width="0.5" rx="0.6" />
<rect x="78.9" y="48.1" width="6" height="1.5" fill="#dedee4" />
<line x1="83.2" y1="49.7" x2="83.2" y2="53.5" stroke="#9c9ca6" stroke-width="0.4" />
<circle cx="80.8" cy="54.9" r="1.9" fill="#2238c8"/>
<circle cx="85.4" cy="55.3" r="1.9" fill="#d88a18"/>
<circle cx="83.2" cy="52.9" r="1.8" fill="#22a832"/>
<rect x="91" y="47.5" width="7.4" height="6.2" fill="#bdbdc4" stroke="#8c8c96" stroke-width="0.5" rx="0.6" />
<rect x="91.7" y="48.1" width="6" height="1.5" fill="#dedee4" />
<line x1="96" y1="49.7" x2="96" y2="53.5" stroke="#9c9ca6" stroke-width="0.4" />
<text x="95.4" y="56.28" font-size="7" fill="#5a5050" font-weight="bold">$</text>
<rect x="1.6" y="60.6" width="218.8" height="7.6" fill="#ffffff" stroke="#dcdcdc" stroke-width="0.6" />
<circle cx="216.6" cy="64" r="1.5" fill="none" stroke="#8a8a8a" stroke-width="0.5"/>
<line x1="217.7" y1="65.1" x2="219" y2="66.6" stroke="#8a8a8a" stroke-width="0.6" />
<g>
<polygon points="3,74.49 7.83,72.39 7.83,79.32 3,81.21" fill="#3a48a8" stroke="#222a78" stroke-width="0.4" />
<polygon points="6.57,75.33 12.03,73.44 12.03,79.53 6.57,81.63" fill="#6a86d8" stroke="#2a3a98" stroke-width="0.4" />
</g>
<polygon points="13.8,76.6 17,76.6 15.4,78.52" fill="#222" />
<ellipse cx="22.6" cy="74.6" rx="3.6" ry="1.7" fill="#e8e8f0" stroke="#8a8a94" stroke-width="0.5"/>
<ellipse cx="22.6" cy="74.6" rx="1.7" ry="1.2" fill="#5a78d8"/>
<path d="M22.6 76.39999999999999V80.2H24.6" fill="none" stroke="#aaa" stroke-width="0.5" />
<rect x="25" y="76.6" width="2.4" height="2" fill="#3a68d8" stroke="#9a9aa4" stroke-width="0.4" />
<rect x="25" y="79.4" width="2.4" height="2" fill="#3a68d8" stroke="#9a9aa4" stroke-width="0.4" />
<ellipse cx="35" cy="74.6" rx="3.6" ry="1.7" fill="#e8e8f0" stroke="#8a8a94" stroke-width="0.5"/>
<ellipse cx="35" cy="74.6" rx="1.7" ry="1.2" fill="#5a78d8"/>
<path d="M35 76.39999999999999V80.2H37" fill="none" stroke="#aaa" stroke-width="0.5" />
<rect x="37.4" y="76.6" width="2.4" height="2" fill="#f4f4f6" stroke="#9a9aa4" stroke-width="0.4" />
<rect x="37.4" y="79.4" width="2.4" height="2" fill="#f4f4f6" stroke="#9a9aa4" stroke-width="0.4" />
<ellipse cx="47.6" cy="74.6" rx="3.6" ry="1.7" fill="#e8e8f0" stroke="#8a8a94" stroke-width="0.5"/>
<ellipse cx="47.6" cy="74.6" rx="1.7" ry="1.2" fill="#5a78d8"/>
<path d="M47.6 76.39999999999999V80.2H49.6" fill="none" stroke="#aaa" stroke-width="0.5" />
<rect x="50" y="76.6" width="2.4" height="2" fill="#f4f4f6" stroke="#9a9aa4" stroke-width="0.4" />
<rect x="50" y="79.4" width="2.4" height="2" fill="#f4f4f6" stroke="#9a9aa4" stroke-width="0.4" />
<polygon points="143,77 147.2,74.4 151.4,77 147.2,79.6" fill="#2a38c8" stroke="#1a2290" stroke-width="0.4" />
<polygon points="143,77 147.2,79.6 151.4,77 151.4,78 147.2,80.6 143,78" fill="#1a2290" />
<polygon points="152.5,76.95 155.1,76.95 153.8,78.51" fill="#222" />
<g>
<polygon points="156.8,74.8 161.4,72.8 161.4,79.4 156.8,81.2" fill="#3a48a8" stroke="#222a78" stroke-width="0.4" />
<polygon points="160.2,75.6 165.4,73.8 165.4,79.6 160.2,81.6" fill="#6a86d8" stroke="#2a3a98" stroke-width="0.4" />
</g>
<polygon points="167.3,76.95 169.9,76.95 168.6,78.51" fill="#222" />
<path d="M174.6 73.2L174.6 80.0L176.2 78.6L177.4 81.39999999999999L178.4 81.0L177.3 78.3L179.4 78.2Z" fill="#ffffff" stroke="#333" stroke-width="0.5" />
<rect x="185.2" y="76.6" width="7.6" height="4.2" fill="#f2f08a" stroke="#58c8d8" stroke-width="0.7" />
<path d="M188.4 74.39999999999999q2.4 -1.6 3.6 1.4" fill="none" stroke="#6a6a6a" stroke-width="0.6" />
<ellipse cx="201.4" cy="75.6" rx="4.4" ry="2.5" fill="#eef0f8" stroke="#8a8a98" stroke-width="0.55"/>
<ellipse cx="201.4" cy="75.8" rx="2.1" ry="1.9" fill="#5a86d8"/>
<circle cx="201.4" cy="75.8" r="0.8" fill="#1a2a6a"/>
<text x="201.4" y="81.22" font-size="3" fill="#333" text-anchor="middle" font-weight="bold">+ / -</text>
<ellipse cx="213.8" cy="75.6" rx="4.4" ry="2.5" fill="#eef0f8" stroke="#8a8a98" stroke-width="0.55"/>
<ellipse cx="213.8" cy="75.8" rx="2.1" ry="1.9" fill="#5a86d8"/>
<circle cx="213.8" cy="75.8" r="0.8" fill="#1a2a6a"/>
<text x="213.8" y="81.22" font-size="3" fill="#333" text-anchor="middle" font-weight="bold">1</text>
<rect x="1.6" y="85.4" width="218.8" height="8" fill="#f3f3f3" stroke="#dcdcdc" stroke-width="0.5" />
<line x1="73.4" y1="85.8" x2="73.4" y2="93.2" stroke="#d0d0d0" stroke-width="0.6" />
<line x1="93" y1="85.8" x2="93" y2="93.2" stroke="#d0d0d0" stroke-width="0.6" />
<line x1="113.6" y1="85.8" x2="113.6" y2="93.2" stroke="#d0d0d0" stroke-width="0.6" />
<text x="2.4" y="92.08" font-size="6.4" fill="#1c1c1c" textLength="15.2" lengthAdjust="spacingAndGlyphs">Name</text>
<text x="77.4" y="92.08" font-size="6.4" fill="#1c1c1c" textLength="5" lengthAdjust="spacingAndGlyphs">ID</text>
<path d="M87.5 89.8L87.50 86.80A3 3 0 0 1 90.10 88.30Z" fill="#e02020" />
<path d="M87.5 89.8L90.10 88.30A3 3 0 0 1 90.10 91.30Z" fill="#e0c020" />
<path d="M87.5 89.8L90.10 91.30A3 3 0 0 1 87.50 92.80Z" fill="#20c020" />
<path d="M87.5 89.8L87.50 92.80A3 3 0 0 1 84.90 91.30Z" fill="#20c0c0" />
<path d="M87.5 89.8L84.90 91.30A3 3 0 0 1 84.90 88.30Z" fill="#2020e0" />
<path d="M87.5 89.8L84.90 88.30A3 3 0 0 1 87.50 86.80Z" fill="#c020c0" />
<circle cx="87.5" cy="89.8" r="0.9" fill="#ffffff" opacity="0.8"/>
<text x="95" y="92.08" font-size="6.4" fill="#1c1c1c" textLength="17.4" lengthAdjust="spacingAndGlyphs">Include</text>
<rect x="1.6" y="93.4" width="218.8" height="71.2" fill="#ffffff" stroke="#dcdcdc" stroke-width="0.5" />
<rect x="214.2" y="93.8" width="6" height="70.4" fill="#f0f0f0" />
<line x1="214.4" y1="100.4" x2="220" y2="100.4" stroke="#9ac8ea" stroke-width="0.8" />
<rect x="214.6" y="132" width="5.2" height="27" fill="#dcdcdc" />
<polygon points="215.8,97.4 218.6,97.4 217.2,95.6" fill="#555" />
<polygon points="215.8,160.8 218.6,160.8 217.2,162.6" fill="#555" />
<text x="19" y="100.61" font-size="6.5" fill="#333333" textLength="36" lengthAdjust="spacingAndGlyphs">Rigid Walls (1)</text>
<path d="M10 95.7h2.4l0.7 0.8h3.0v4.6h-6.1z" fill="#f2cc6a" stroke="#c8982c" stroke-width="0.3" />
<line x1="4.2" y1="98.4" x2="6.8" y2="98.4" stroke="#6a6a6a" stroke-width="0.5" />
<line x1="7.2" y1="98.4" x2="9.6" y2="98.4" stroke="#c0c0c0" stroke-width="0.4" />
<rect x="12.6" y="97.2" width="4.2" height="3.6" fill="#8a8a90" stroke="#5a5a60" stroke-width="0.3" />
<text x="19" y="119.91" font-size="6.5" fill="#333333" textLength="24.5" lengthAdjust="spacingAndGlyphs">Sets (370)</text>
<path d="M10 115.0h2.4l0.7 0.8h3.0v4.6h-6.1z" fill="#f2cc6a" stroke="#c8982c" stroke-width="0.3" />
<line x1="4.2" y1="117.7" x2="6.8" y2="117.7" stroke="#9a9a9a" stroke-width="0.5" />
<line x1="5.5" y1="116.4" x2="5.5" y2="119" stroke="#9a9a9a" stroke-width="0.5" />
<line x1="7.2" y1="117.7" x2="9.6" y2="117.7" stroke="#c0c0c0" stroke-width="0.4" />
<circle cx="14.6" cy="119.1" r="1.8" fill="#28a838"/>
<text x="19" y="129.41" font-size="6.5" fill="#333333" textLength="42" lengthAdjust="spacingAndGlyphs">Set Segments (1)</text>
<path d="M10 124.5h2.4l0.7 0.8h3.0v4.6h-6.1z" fill="#f2cc6a" stroke="#c8982c" stroke-width="0.3" />
<line x1="4.2" y1="127.2" x2="6.8" y2="127.2" stroke="#9a9a9a" stroke-width="0.5" />
<line x1="5.5" y1="125.9" x2="5.5" y2="128.5" stroke="#9a9a9a" stroke-width="0.5" />
<line x1="7.2" y1="127.2" x2="9.6" y2="127.2" stroke="#c0c0c0" stroke-width="0.4" />
<rect x="12.4" y="127" width="3.4" height="3" fill="#7a78c8" />
<circle cx="16" cy="129.2" r="1" fill="#28a838"/>
<text x="19" y="139.01" font-size="6.5" fill="#333333" textLength="48" lengthAdjust="spacingAndGlyphs">Solver Masses (62)</text>
<path d="M10 134.10000000000002h2.4l0.7 0.8h3.0v4.6h-6.1z" fill="#f2cc6a" stroke="#c8982c" stroke-width="0.3" />
<line x1="4.2" y1="136.8" x2="6.8" y2="136.8" stroke="#9a9a9a" stroke-width="0.5" />
<line x1="5.5" y1="135.5" x2="5.5" y2="138.1" stroke="#9a9a9a" stroke-width="0.5" />
<line x1="7.2" y1="136.8" x2="9.6" y2="136.8" stroke="#c0c0c0" stroke-width="0.4" />
<rect x="13" y="135.2" width="3.2" height="4.8" fill="#3a3aa8" />
<circle cx="14.6" cy="136.4" r="0.9" fill="#e8e8ff"/>
<text x="19" y="148.61" font-size="6.5" fill="#333333" textLength="52.4" lengthAdjust="spacingAndGlyphs">System Collectors (1)</text>
<path d="M10 143.70000000000002h2.4l0.7 0.8h3.0v4.6h-6.1z" fill="#f2cc6a" stroke="#c8982c" stroke-width="0.3" />
<line x1="4.2" y1="146.4" x2="6.8" y2="146.4" stroke="#9a9a9a" stroke-width="0.5" />
<line x1="5.5" y1="145.1" x2="5.5" y2="147.7" stroke="#9a9a9a" stroke-width="0.5" />
<line x1="7.2" y1="146.4" x2="9.6" y2="146.4" stroke="#c0c0c0" stroke-width="0.4" />
<path d="M12.6 145.0V149.0H16.6" fill="none" stroke="#222" stroke-width="0.7" />
<circle cx="16.2" cy="148.2" r="1" fill="#28a838"/>
<text x="19" y="158.21" font-size="6.5" fill="#333333" textLength="21" lengthAdjust="spacingAndGlyphs">Titles (1)</text>
<path d="M10 153.3h2.4l0.7 0.8h3.0v4.6h-6.1z" fill="#f2cc6a" stroke="#c8982c" stroke-width="0.3" />
<line x1="4.2" y1="156" x2="6.8" y2="156" stroke="#9a9a9a" stroke-width="0.5" />
<line x1="5.5" y1="154.7" x2="5.5" y2="157.3" stroke="#9a9a9a" stroke-width="0.5" />
<line x1="7.2" y1="156" x2="9.6" y2="156" stroke="#c0c0c0" stroke-width="0.4" />
<rect x="12.8" y="154.8" width="4" height="3" fill="#f8f8f8" stroke="#444" stroke-width="0.4" />
<rect x="17.6" y="103.5" width="96" height="9" fill="#b8d6ea" rx="0.8" />
<path d="M10.6 102.6V108H16.6" fill="none" stroke="#c8c8c8" stroke-width="0.4" />
<rect x="19" y="105" width="5.6" height="6" fill="#8e8e94" stroke="#5e5e64" stroke-width="0.4" />
<line x1="21" y1="105" x2="21" y2="111" stroke="#6a6a70" stroke-width="0.4" />
<line x1="22.8" y1="105" x2="22.8" y2="111" stroke="#b8b8be" stroke-width="0.4" />
<text x="28" y="110.18" font-size="6.4" fill="#2a2a2a" textLength="12" lengthAdjust="spacingAndGlyphs">Pole</text>
<text x="79.2" y="110.18" font-size="6.4" fill="#2a2a2a">1</text>
<rect x="85.2" y="105" width="6.2" height="6" fill="#10e010" stroke="#1a6a1a" stroke-width="0.5" />
<text x="108.8" y="110.18" font-size="6.4" fill="#2a2a2a">0</text>
<rect x="108.6" y="166.6" width="0.9" height="0.9" fill="#8a8a8a" />
<rect x="111.8" y="166.6" width="0.9" height="0.9" fill="#8a8a8a" />
<rect x="115" y="166.6" width="0.9" height="0.9" fill="#8a8a8a" />
<polygon points="215.8,166.4 218.4,166.4 217.1,168" fill="#666" />
<rect x="1.6" y="171.8" width="219.8" height="246.6" fill="#ffffff" stroke="#ccd4dc" stroke-width="0.6" />
<rect x="2" y="172.2" width="219" height="10.2" fill="#f3f3f3" />
<text x="2.6" y="179.98" font-size="7" fill="#1c1c1c" textLength="16.6" lengthAdjust="spacingAndGlyphs">Name</text>
<text x="72" y="179.98" font-size="7" fill="#1c1c1c" textLength="15.6" lengthAdjust="spacingAndGlyphs">Value</text>
<text x="10.4" y="188.74" font-size="6.3" fill="#8e8e8e" textLength="39.8" lengthAdjust="spacingAndGlyphs">Solver Keyword:</text>
<text x="73" y="188.74" font-size="6.3" fill="#8e8e8e" textLength="33.6" lengthAdjust="spacingAndGlyphs">/RWALL/CYL</text>
<text x="10.4" y="198.34" font-size="6.3" fill="#2a2a2a" textLength="6.4" lengthAdjust="spacingAndGlyphs">ID:</text>
<text x="73" y="198.34" font-size="6.3" fill="#2a2a2a">1</text>
<text x="10.4" y="207.94" font-size="6.3" fill="#2a2a2a" textLength="16.4" lengthAdjust="spacingAndGlyphs">Name:</text>
<text x="73" y="207.94" font-size="6.3" fill="#2a2a2a" textLength="12.2" lengthAdjust="spacingAndGlyphs">Pole</text>
<text x="10.4" y="217.54" font-size="6.3" fill="#2a2a2a" textLength="14.8" lengthAdjust="spacingAndGlyphs">Color:</text>
<text x="10.4" y="227.14" font-size="6.3" fill="#8e8e8e" textLength="19.4" lengthAdjust="spacingAndGlyphs">Include:</text>
<text x="73" y="227.14" font-size="6.3" fill="#8e8e8e" textLength="38" lengthAdjust="spacingAndGlyphs">[Master Model]</text>
<text x="10.4" y="236.74" font-size="6.3" fill="#2a2a2a" textLength="21" lengthAdjust="spacingAndGlyphs">Defined:</text>
<text x="10.4" y="246.34" font-size="6.3" fill="#8e8e8e" textLength="40.6" lengthAdjust="spacingAndGlyphs">Rigidwall config:</text>
<text x="73" y="246.34" font-size="6.3" fill="#8e8e8e" textLength="14.4" lengthAdjust="spacingAndGlyphs">Rwall</text>
<text x="10.4" y="255.94" font-size="6.3" fill="#2a2a2a" textLength="38" lengthAdjust="spacingAndGlyphs">Geometry type:</text>
<text x="73" y="255.94" font-size="6.3" fill="#2a2a2a" textLength="20.6" lengthAdjust="spacingAndGlyphs">Cylinder</text>
<text x="18.4" y="275.14" font-size="6.3" fill="#2a2a2a" textLength="27.8" lengthAdjust="spacingAndGlyphs">XM,YM,ZM:</text>
<text x="73" y="275.14" font-size="6.3" fill="#2a2a2a" textLength="40" lengthAdjust="spacingAndGlyphs">2215, 1020, 1400</text>
<text x="18.4" y="284.74" font-size="6.3" fill="#2a2a2a" textLength="19.2" lengthAdjust="spacingAndGlyphs">Normal:</text>
<text x="73" y="284.74" font-size="6.3" fill="#2a2a2a" textLength="14" lengthAdjust="spacingAndGlyphs">0, 0, 1</text>
<text x="18.4" y="294.34" font-size="6.3" fill="#8e8e8e" textLength="11.4" lengthAdjust="spacingAndGlyphs">XM1:</text>
<text x="73" y="294.34" font-size="6.3" fill="#8e8e8e" textLength="16.2" lengthAdjust="spacingAndGlyphs">2215.0</text>
<text x="18.4" y="303.94" font-size="6.3" fill="#8e8e8e" textLength="11.4" lengthAdjust="spacingAndGlyphs">YM1:</text>
<text x="73" y="303.94" font-size="6.3" fill="#8e8e8e" textLength="16.2" lengthAdjust="spacingAndGlyphs">1020.0</text>
<text x="18.4" y="313.54" font-size="6.3" fill="#8e8e8e" textLength="11.2" lengthAdjust="spacingAndGlyphs">ZM1:</text>
<text x="73" y="313.54" font-size="6.3" fill="#8e8e8e" textLength="16.2" lengthAdjust="spacingAndGlyphs">1401.0</text>
<text x="18.4" y="332.74" font-size="6.3" fill="#2a2a2a" textLength="14" lengthAdjust="spacingAndGlyphs">Slide:</text>
<text x="73" y="332.74" font-size="6.3" fill="#2a2a2a" textLength="50.4" lengthAdjust="spacingAndGlyphs">2: Sliding with friction</text>
<text x="18.4" y="342.34" font-size="6.3" fill="#2a2a2a" textLength="27.6" lengthAdjust="spacingAndGlyphs">gmod_ID1:</text>
<text x="73" y="342.34" font-size="6.3" fill="#2a2a2a" textLength="36.6" lengthAdjust="spacingAndGlyphs">&lt;Unspecified&gt;</text>
<text x="18.4" y="351.94" font-size="6.3" fill="#2a2a2a" textLength="27.6" lengthAdjust="spacingAndGlyphs">gmod_ID2:</text>
<text x="73" y="351.94" font-size="6.3" fill="#2a2a2a" textLength="36.6" lengthAdjust="spacingAndGlyphs">&lt;Unspecified&gt;</text>
<text x="18.4" y="361.54" font-size="6.3" fill="#2a2a2a" textLength="22.6" lengthAdjust="spacingAndGlyphs">Dsearch:</text>
<text x="73" y="361.54" font-size="6.3" fill="#2a2a2a" textLength="13.4" lengthAdjust="spacingAndGlyphs">500.0</text>
<text x="18.4" y="371.14" font-size="6.3" fill="#2a2a2a" textLength="13.6" lengthAdjust="spacingAndGlyphs">FRIC:</text>
<text x="73" y="371.14" font-size="6.3" fill="#2a2a2a" textLength="7" lengthAdjust="spacingAndGlyphs">0.1</text>
<text x="18.4" y="380.74" font-size="6.3" fill="#2a2a2a" textLength="24.6" lengthAdjust="spacingAndGlyphs">Diameter:</text>
<text x="73" y="380.74" font-size="6.3" fill="#2a2a2a" textLength="13.4" lengthAdjust="spacingAndGlyphs">254.0</text>
<text x="18.4" y="390.34" font-size="6.3" fill="#2a2a2a" textLength="7.4" lengthAdjust="spacingAndGlyphs">ifq:</text>
<text x="73" y="390.34" font-size="6.3" fill="#2a2a2a" textLength="32" lengthAdjust="spacingAndGlyphs">0: No filtering</text>
<text x="10.4" y="399.94" font-size="6.3" fill="#2a2a2a" textLength="31.6" lengthAdjust="spacingAndGlyphs">Motion Card:</text>
<rect x="72.8" y="212.2" width="6.4" height="6.4" fill="#10e010" stroke="#1a6a1a" stroke-width="0.5" />
<rect x="72.8" y="231.6" width="5.8" height="5.8" fill="#e4eef6" stroke="#8a9aac" stroke-width="0.5" />
<path d="M74 234.4l1.4 1.6 2.4 -3.2" fill="none" stroke="#2a5ab8" stroke-width="0.9" />
<rect x="72.8" y="394.8" width="5.8" height="5.8" fill="#ececec" stroke="#9a9a9a" stroke-width="0.5" />
<rect x="2" y="258.6" width="219" height="9.6" fill="#f0f0f0" />
<rect x="4" y="261.2" width="4.2" height="4.2" fill="#ffffff" stroke="#8a8a8a" stroke-width="0.4" />
<line x1="5" y1="263.3" x2="7.2" y2="263.3" stroke="#444" stroke-width="0.5" />
<text x="9.9" y="265.54" font-size="6.3" fill="#1c1c1c" font-weight="bold" textLength="48.6" lengthAdjust="spacingAndGlyphs">Engineering data</text>
<rect x="2" y="316.2" width="219" height="9.6" fill="#f0f0f0" />
<rect x="4" y="318.8" width="4.2" height="4.2" fill="#ffffff" stroke="#8a8a8a" stroke-width="0.4" />
<line x1="5" y1="320.9" x2="7.2" y2="320.9" stroke="#444" stroke-width="0.5" />
<text x="9.9" y="323.14" font-size="6.3" fill="#1c1c1c" font-weight="bold" textLength="22.6" lengthAdjust="spacingAndGlyphs">Support</text>
<line x1="223.6" y1="38.2" x2="223.6" y2="418.4" stroke="#4a4a4a" stroke-width="0.9" />
<line x1="221.8" y1="45.6" x2="221.8" y2="418" stroke="#e2e2e2" stroke-width="0.6" />
<text x="2.2" y="427.04" font-size="6.3" fill="#2a2a2a" textLength="17" lengthAdjust="spacingAndGlyphs">Ready</text>
<rect x="228.2" y="48.2" width="0.9" height="0.9" fill="#7a7a7a" />
<rect x="230.6" y="48.2" width="0.9" height="0.9" fill="#7a7a7a" />
<rect x="233" y="48.2" width="0.9" height="0.9" fill="#7a7a7a" />
<rect x="235.4" y="48.2" width="0.9" height="0.9" fill="#7a7a7a" />
<polygon points="228.6,56 235.4,53.4 235.4,59.2 228.6,61.6" fill="#35377f" stroke="#20224e" stroke-width="0.4" />
<polygon points="228.6,56 235.4,53.4 235.4,54.8 228.6,57.4" fill="#7a7cba" />
<line x1="235.8" y1="52.4" x2="235.8" y2="59.6" stroke="#9a9aae" stroke-width="0.5" />
<rect x="227.8" y="57" width="5.4" height="5.2" fill="#f2dcda" stroke="#e0503e" stroke-width="0.8" opacity="0.92" />
<line x1="230.6" y1="56.8" x2="230.6" y2="62.2" stroke="#e8a8a0" stroke-width="0.4" />
<polygon points="228.6,67.4 235.4,64.8 235.4,70.6 228.6,73" fill="#35377f" stroke="#20224e" stroke-width="0.4" />
<polygon points="228.6,67.4 235.4,64.8 235.4,66.2 228.6,68.8" fill="#7a7cba" />
<line x1="235.8" y1="63.8" x2="235.8" y2="71" stroke="#9a9aae" stroke-width="0.5" />
<polygon points="231.4,71.8 236,69.6 235.4,71.2 236.6,72 233,73.4" fill="#e01818" />
<polygon points="228.6,79 235.4,76.4 235.4,82.2 228.6,84.6" fill="#35377f" stroke="#20224e" stroke-width="0.4" />
<polygon points="228.6,79 235.4,76.4 235.4,77.8 228.6,80.4" fill="#7a7cba" />
<line x1="235.8" y1="75.4" x2="235.8" y2="82.6" stroke="#9a9aae" stroke-width="0.5" />
<polygon points="228.6,90.6 235.4,88 235.4,93.8 228.6,96.2" fill="#35377f" stroke="#20224e" stroke-width="0.4" />
<polygon points="228.6,90.6 235.4,88 235.4,89.4 228.6,92" fill="#7a7cba" />
<line x1="235.8" y1="87" x2="235.8" y2="94.2" stroke="#9a9aae" stroke-width="0.5" />
<polygon points="228.6,102.8 235.4,100.2 235.4,106 228.6,108.4" fill="#35377f" stroke="#20224e" stroke-width="0.4" />
<polygon points="228.6,102.8 235.4,100.2 235.4,101.6 228.6,104.2" fill="#7a7cba" />
<line x1="235.8" y1="99.2" x2="235.8" y2="106.4" stroke="#9a9aae" stroke-width="0.5" />
<rect x="227.8" y="103.8" width="5.4" height="5.2" fill="#f2dcda" stroke="#e0503e" stroke-width="0.8" opacity="0.92" />
<line x1="230.6" y1="103.6" x2="230.6" y2="109" stroke="#e8a8a0" stroke-width="0.4" />
<circle cx="231.6" cy="115.6" r="4.3" fill="#f8e8e4" stroke="#e05a4a" stroke-width="0.8"/>
<polygon points="229.6,114 233.8,112.6 233.8,117.8 229.6,118.8" fill="#3a3c98" stroke="#22246a" stroke-width="0.3" />
<path d="M228.2 124.6l2.2 -1.4 2.2 3.8 -2.2 1.6z" fill="#22246a" />
<path d="M231.6 123.2l2.4 -1.2 2.4 4 -2.4 1.6z" fill="#3a3c9a" />
<circle cx="229.6" cy="128.6" r="1.4" fill="#5a5cc0"/>
<circle cx="234.2" cy="127.4" r="1.4" fill="#5a5cc0"/>
<circle cx="229.8" cy="136" r="1.9" fill="#2030c8"/>
<text x="229.8" y="137.09" font-size="3.2" fill="#fff" text-anchor="middle" font-weight="bold">i</text>
<text x="231.6" y="142.76" font-size="3.4" fill="#222" text-anchor="middle" font-weight="bold">123</text>
<path d="M228 148.4V155.6M235.6 146.4V153.6" fill="none" stroke="#333" stroke-width="0.6" />
<path d="M228 150L235.6 153M228 155L235.6 147.4" fill="none" stroke="#3a3c9a" stroke-width="0.7" />
<rect x="226.8" y="157.6" width="10" height="11.4" fill="#f6c27c" stroke="#e8a858" stroke-width="0.5" />
<rect x="228.2" y="159.2" width="3.2" height="3.4" fill="#3a3c9a" />
<rect x="231.8" y="158.8" width="3.4" height="3.4" fill="#8a8cd0" />
<text x="231.8" y="167.42" font-size="3.6" fill="#3a2a10" text-anchor="middle" font-weight="bold">ABC</text>
<line x1="228.4" y1="171" x2="228.4" y2="177.4" stroke="#d02020" stroke-width="0.8" />
<rect x="227.8" y="173.4" width="1.2" height="1.2" fill="#d02020" />
<text x="232.6" y="179.42" font-size="3.6" fill="#222" text-anchor="middle" font-weight="bold">ABC</text>
<text x="231.2" y="185.76" font-size="3.4" fill="#3a3c9a" text-anchor="middle" font-weight="bold">ABC</text>
<rect x="227.6" y="185.8" width="1.6" height="2.4" fill="#d02020" />
<rect x="233.6" y="187.2" width="1.8" height="2.4" fill="#d02020" />
<path d="M229.4 187.6h4" fill="none" stroke="#3a3c9a" stroke-width="0.5" />
<polygon points="228.6,195.4 235.4,193.6 235.4,199.6 228.6,201.6" fill="#3a58c8" stroke="#22246a" stroke-width="0.4" />
<line x1="228.4" y1="194.4" x2="228.4" y2="203" stroke="#22246a" stroke-width="0.6" />
<line x1="235.6" y1="192.6" x2="235.6" y2="201" stroke="#22246a" stroke-width="0.6" />
<rect x="239.6" y="46" width="557" height="267.2" fill="url(#vpbg)" />
<clipPath id="vpclip"><rect x="239.6" y="46.0" width="557.0" height="267.2"/></clipPath>
<g clip-path="url(#vpclip)">
<g>
<rect x="286.2" y="99" width="192.2" height="215" fill="url(#wallg)" opacity="0.62" />
<rect x="362.4" y="99" width="39.2" height="215" fill="url(#cylg)" opacity="0.5" />
<g stroke-linejoin="round">
<polygon points="465.6,103.6 520,102 600,103.2 606,106.4 604,110.4 520,109.4 466,109.6 463.6,106.8" fill="#841c50" stroke="#33203c" stroke-width="0.6" />
<polygon points="465.6,103.6 520,102 600,103.2 606,106.4 604,110.4 520,109.4 466,109.6 463.6,106.8" fill="url(#mesh)" opacity="0.7" />
<polygon points="462,112.6 478,112.2 582,111.8 607,113 612,118.6 606,119.2 582,118.8 478,118.6 458.6,118.8" fill="#c0245c" stroke="#33203c" stroke-width="0.5" />
<polygon points="462,112.6 478.4,112.2 478.4,118.6 458.6,118.8" fill="#6c2060" />
<polygon points="582,111.8 607,113 613,119.4 606,119.4 582,118.8" fill="#7444a6" />
<line x1="478" y1="115.6" x2="582" y2="115.4" stroke="#e0407a" stroke-width="0.8" opacity="0.6"/>
<rect x="466" y="106" width="12" height="2.6" fill="#e04818" rx="1" />
<rect x="592" y="106.2" width="9" height="2.4" fill="#e04818" rx="1" />
<line x1="466" y1="110.8" x2="600" y2="110.8" stroke="#2a1238" stroke-width="0.8" />
<polygon points="452,106.3 458,104.2 464,103.2 466.4,107.8 461,114 452.4,125 446,139 441,150 437,158 436.5,160 423,160 424.4,155.5 432.6,140 441,125 447,113" fill="#74204e" stroke="#33203c" stroke-width="0.6" />
<polygon points="452,106.3 458,104.2 464,103.2 466.4,107.8 461,114 452.4,125 446,139 441,150 437,158 436.5,160 423,160 424.4,155.5 432.6,140 441,125 447,113" fill="url(#mesh)" opacity="0.8" />
<line x1="462" y1="112" x2="455" y2="124" stroke="#c8c020" stroke-width="0.9" />
<line x1="458" y1="106" x2="430" y2="158" stroke="#5c1444" stroke-width="0.7" />
<path d="M424 157 L436.6 157.6 L433 170 L429 186 L428 190.4 L406.4 190.4 Q408 176 416 168 Z" fill="#b4285e" stroke="#33203c" stroke-width="0.5" />
<path d="M424 157 L436.6 157.6 L433 170 L429 186 L428 190.4 L406.4 190.4 Q408 176 416 168 Z" fill="url(#meshl)" />
<path d="M425.6 156 Q408 176 405.2 200 Q402.6 232 407.6 254 Q412 270 421 277.4 Q428 282 437 282.4 L437 279.6 Q428 279.4 421.6 274.6 Q414 268 410 252 Q406.6 232 408 200 Q409.6 180 427.6 158 Z" fill="#701a44" stroke="#33203c" stroke-width="0.5" />
<linearGradient id="yel" x1="0" y1="0" x2="0" y2="1"><stop offset="0" stop-color="#85841f"/><stop offset="0.45" stop-color="#9c9c18"/><stop offset="1" stop-color="#b4b40c"/></linearGradient>
<path d="M407 190.2 L428 190.2 L428.4 279.2 Q422 278.4 417 273 Q411 264 408.4 250 Q406 232 406 214 Z" fill="url(#yel)" stroke="#3a3010" stroke-width="0.4" />
<path d="M407 190.2 L428 190.2 L428.4 279.2 Q422 278.4 417 273 Q411 264 408.4 250 Q406 232 406 214 Z" fill="url(#mesh)" />
<rect x="427.4" y="269" width="1.8" height="9" fill="#d020c0" />
<path d="M428.6 263 Q432 264 433 270 L433 278.8 L429.4 278.8 Z" fill="#a02850" />
<path d="M430.4 194 L545 194 L548 192.6 L640 192.6 L640 262 L430.4 262 Z" fill="#24466a" stroke="#18283c" stroke-width="0.4" />
<path d="M430.4 194 L545 194 L548 192.6 L640 192.6 L640 262 L430.4 262 Z" fill="url(#mesh)" opacity="0.7" />
<path d="M612 262 Q614 236 632 214 L639 206 L639 262 Z" fill="#4a6a90" opacity="0.7" />
<path d="M436 262 Q434 230 446 206 L432 200 L431 262 Z" fill="#365a88" opacity="0.7" />
<rect x="430.4" y="194" width="48" height="68" fill="#3c6cae" opacity="0.26" />
<path d="M496 199 Q500 196 512 197 L522 200 L586 197 L590 229 L560 230 L496 230 Q492 214 496 199 Z" fill="#1b2c50" opacity="0.42" />
<rect x="529" y="201" width="3" height="27" fill="#182646" opacity="0.28" />
<rect x="541" y="201" width="3" height="27" fill="#182646" opacity="0.28" />
<rect x="553" y="201" width="3" height="27" fill="#182646" opacity="0.28" />
<rect x="565" y="201" width="3" height="27" fill="#182646" opacity="0.28" />
<rect x="577" y="201" width="3" height="27" fill="#182646" opacity="0.28" />
<rect x="527" y="212" width="56" height="2.6" fill="#182646" opacity="0.28" />
<rect x="527" y="222" width="56" height="2.2" fill="#182646" opacity="0.22" />
<path d="M497 199 q8 4 4 12 q-6 8 2 16" fill="none" stroke="#3a2a6a" stroke-width="1.6" opacity="0.6" />
<path d="M512 198 q6 8 0 16 q-4 8 4 14" fill="none" stroke="#3a2a6a" stroke-width="1.4" opacity="0.5" />
<rect x="520" y="204" width="1.4" height="1.4" fill="#7a4ab0" opacity="0.8" />
<rect x="531" y="211" width="1.4" height="1.4" fill="#7a4ab0" opacity="0.8" />
<rect x="548" y="200" width="1.4" height="1.4" fill="#7a4ab0" opacity="0.8" />
<rect x="556" y="214" width="1.4" height="1.4" fill="#7a4ab0" opacity="0.8" />
<rect x="566" y="206" width="1.4" height="1.4" fill="#7a4ab0" opacity="0.8" />
<rect x="572" y="221" width="1.4" height="1.4" fill="#7a4ab0" opacity="0.8" />
<rect x="540" y="224" width="1.4" height="1.4" fill="#7a4ab0" opacity="0.8" />
<rect x="513" y="219" width="1.4" height="1.4" fill="#7a4ab0" opacity="0.8" />
<rect x="584" y="228" width="1.4" height="1.4" fill="#7a4ab0" opacity="0.8" />
<rect x="598" y="217" width="1.4" height="1.4" fill="#7a4ab0" opacity="0.8" />
<rect x="622" y="203" width="1.4" height="1.4" fill="#7a4ab0" opacity="0.8" />
<rect x="616" y="226" width="1.4" height="1.4" fill="#7a4ab0" opacity="0.8" />
<rect x="505" y="240" width="1.4" height="1.4" fill="#7a4ab0" opacity="0.8" />
<rect x="497" y="226" width="1.4" height="1.4" fill="#7a4ab0" opacity="0.8" />
<rect x="609" y="241" width="1.4" height="1.4" fill="#7a4ab0" opacity="0.8" />
<rect x="627" y="236" width="1.4" height="1.4" fill="#7a4ab0" opacity="0.8" />
<rect x="493" y="226" width="4" height="7" fill="#6a48a8" opacity="0.8" />
<ellipse cx="453" cy="202.4" rx="5.2" ry="4.6" fill="#7d94bc"/>
<ellipse cx="483.4" cy="214.4" rx="4.6" ry="4.4" fill="#8ea0b8"/>
<ellipse cx="505.6" cy="205.6" rx="3.0" ry="5.2" fill="#8ea0b8"/>
<path d="M491 236 Q496 233 501 236.4 Q504.6 244 502.4 251.6 Q497 254 492.6 250 Q488 243 491 236Z" fill="#a8b0ba" />
<rect x="593" y="202.4" width="6.4" height="6.4" fill="#9aaabe" rx="1" />
<circle cx="576.8" cy="236.8" r="1.5" fill="#d0d6dc"/>
<line x1="430.4" y1="232" x2="639" y2="232" stroke="#b48e8e" stroke-width="0.6" />
<line x1="619.7" y1="139" x2="562" y2="257" stroke="#aaa29c" stroke-width="0.55" />
<rect x="487" y="160.4" width="95" height="13" fill="#38348c" stroke="#33203c" stroke-width="0.4" />
<rect x="487" y="160.4" width="24" height="13" fill="#2a2a74" />
<rect x="487" y="160.4" width="95" height="13" fill="url(#mesh)" />
<line x1="487" y1="168.6" x2="582" y2="168.6" stroke="#1c1c58" stroke-width="0.6" />
<path d="M441.6 157.6 L465.7 156.3 L469.5 160.9 L487.7 160.6 L489 169.7 L482.4 174.2 L466.5 210.5 L463.5 203 L450 195.3 L437 193.8 L437.8 178.7 L434 178 L437.8 162 Z M463.6 164.6 L468.8 166.6 L468.6 170.6 L463.8 169.6 Z M455.6 175.8 Q462 174.4 462.4 178 L459.6 190 Q454 192.6 452.6 188.6 Z" fill="#984420" stroke="#33203c" stroke-width="0.5" fill-rule="evenodd"/>
<path d="M441.6 157.6 L465.7 156.3 L469.5 160.9 L487.7 160.6 L489 169.7 L482.4 174.2 L466.5 210.5 L463.5 203 L450 195.3 L437 193.8 L437.8 178.7 L434 178 L437.8 162 Z" fill="url(#mesh)" opacity="0.7" />
<line x1="470" y1="161.4" x2="455" y2="197" stroke="#6a2a10" stroke-width="0.6" />
<line x1="441.6" y1="160.8" x2="463" y2="159.6" stroke="#c8c8d0" stroke-width="0.6" opacity="0.6"/>
<path d="M581.5 160.2 L600.4 160 L603.4 156.4 L627 156.8 L627.6 161.4 L632 163 L635 178.8 L630 179.5 L628.4 192.4 L618.6 194 L605.7 203 L604.2 210 L601 206 L589 175.7 L581.5 172.7 Z M600.4 165.2 L605.6 164.4 L605.8 170 L600.8 170.6 Z M608 175.6 Q614 173.6 615.4 176 L617.4 188.6 Q613 192 610.8 190.6 Z" fill="#3e6fa4" stroke="#1a2a4a" stroke-width="0.5" fill-rule="evenodd"/>
<path d="M581.5 160.2 L600.4 160 L603.4 156.4 L627 156.8 L627.6 161.4 L632 163 L635 178.8 L630 179.5 L628.4 192.4 L618.6 194 L605.7 203 L604.2 210 L601 206 L589 175.7 L581.5 172.7 Z" fill="url(#mesh)" opacity="0.6" />
<line x1="600" y1="162" x2="614" y2="198" stroke="#284a78" stroke-width="0.6" />
<line x1="606" y1="159.2" x2="626" y2="159.6" stroke="#b8c4d4" stroke-width="0.6" opacity="0.55"/>
<path d="M603 103 L608 106 L616 113 L628 134 L636 155 L629.6 158 L621 140 L609 118.4 L603 114 Z" fill="#682058" stroke="#33203c" stroke-width="0.6" />
<path d="M629.4 156 L635.8 153.6 L639.4 168 L641.4 182 L643.2 215 L643.2 264 L640.4 264 L640 215 L638 186 L634.6 170 Z" fill="#2c1c4c" stroke="#1a1030" stroke-width="0.4" />
<path d="M611 118 L621 136 L628 152" fill="none" stroke="#20c8c0" stroke-width="0.9" />
<path d="M606 110 L618 126 L628 146 L634 164" fill="none" stroke="#b01840" stroke-width="0.9" />
<path d="M636.4 152 L640.6 168 L643 186 L644.6 214 L644.6 230" fill="none" stroke="#22b4b4" stroke-width="0.7" />
<line x1="639.2" y1="206" x2="639.2" y2="258" stroke="#30a840" stroke-width="0.8" />
<line x1="638.4" y1="190" x2="638.8" y2="208" stroke="#2020d0" stroke-width="0.8" />
<path d="M634.8 262 H641.6 V279 H636.4 V268" fill="none" stroke="#2a2434" stroke-width="0.6" />
<rect x="634.6" y="262" width="2" height="7.4" fill="#3a3050" />
<path d="M531 233 L558 233 L563 240 L568 255 L578 258.5 L577 262 L518 262 L522 250 L527 238 Z" fill="#adb3ba" />
<path d="M518.6 262 L521 254.6 Q524 249.6 530 249.6 L547 249.6 Q553.6 250 555.6 255 L557.4 262 L551 262 L549.4 257 Q548 254.6 545 254.6 L531 254.6 Q527.4 254.8 526 258 L524.8 262 Z" fill="#483e58" stroke="#2a2238" stroke-width="0.4" />
<path d="M586.6 239 L594.4 238.6 L596 244 L591 254 L584 264 L577 270 L570 274 L565 274 L565 262 L572 261 L578 255 L583 246 Z" fill="#3b72ac" stroke="#1a2a4a" stroke-width="0.5" />
<polygon points="596,243 599,246.4 604,245.4 604.4,248.4 597,250 593.4,249" fill="#7a1838" />
<polygon points="589.6,258.4 605,258.4 612,266.6 589.6,266.6" fill="#3a3448" />
<polygon points="604.2,234 610.8,235.6 633.6,261.6 633.6,269.4 618.8,270.4 605,246" fill="#3a3a6a" stroke="#16162e" stroke-width="0.5" />
<polygon points="604.2,234 610.8,235.6 633.6,261.6 630,263" fill="#50507e" />
<circle cx="608.4" cy="265.4" r="1.6" fill="#a01830"/>
<path d="M474.6 239 L481.2 238.6 L485.2 249.4 L491.7 258.4 L497 261.4 L505 261.6 L505 273.8 L492 273.8 L486.8 269.8 L478.7 257.6 L474.6 246 Z" fill="#9c461c" stroke="#3a1a08" stroke-width="0.5" />
<path d="M474.6 239 L481.2 238.6 L485.2 249.4 L491.7 258.4 L497 261.4 L505 261.6 L505 273.8 L492 273.8 L486.8 269.8 L478.7 257.6 L474.6 246 Z" fill="url(#mesh)" opacity="0.6" />
<path d="M464.9 234.8 L465.8 246.2 L469 247.8 L473.8 240.5 L474.6 248.6 L456 265.7 L451 271.4 L437.2 269.8 L435.6 262 L441.3 253.5 Z" fill="#8e4e4a" stroke="#2a1a28" stroke-width="0.5" />
<path d="M464.9 234.8 L465.8 246.2 L469 247.8 L473.8 240.5 L474.6 248.6 L456 265.7 L451 271.4 L437.2 269.8 L435.6 262 L441.3 253.5 Z" fill="url(#mesh)" opacity="0.5" />
<polygon points="466.4,243 473.8,240.5 474.4,247 469,248" fill="#844a70" />
<line x1="464.4" y1="240.5" x2="438" y2="264.6" stroke="#a8645c" stroke-width="0.6" />
<line x1="466" y1="250" x2="447" y2="268" stroke="#6a3838" stroke-width="0.6" />
<rect x="505" y="262" width="17" height="12" fill="#5b3e9e" />
<rect x="522" y="262" width="25" height="12" fill="#9c461c" />
<rect x="547" y="262" width="18" height="12" fill="#5b3e9e" />
<rect x="505" y="262" width="60" height="12" fill="url(#mesh)" opacity="0.6" />
<rect x="505" y="262" width="60" height="12" fill="none" stroke="#2a1a38" stroke-width="0.4" />
<rect x="435.6" y="268.2" width="53" height="6.4" fill="#74469a" />
<rect x="585.4" y="267.8" width="49.6" height="7" fill="#6a3c8c" />
<rect x="435.6" y="268.2" width="53" height="6.4" fill="url(#mesh)" opacity="0.5" />
<rect x="585.4" y="267.8" width="49.6" height="7" fill="url(#mesh)" opacity="0.5" />
<line x1="435" y1="275.4" x2="635" y2="275.4" stroke="#d4a6b0" stroke-width="0.7" />
<line x1="455" y1="267.6" x2="483.6" y2="267.6" stroke="#caa4c0" stroke-width="0.6" />
<line x1="585.6" y1="268" x2="615" y2="268" stroke="#caa4c0" stroke-width="0.6" />
<path d="M436.4 276.6 L525 276.6 Q526.4 281 521 283.4 L510 284.2 L483 284.2 L480 286.4 L447 286 L442 283.6 L436.4 283 Z" fill="#86203f" stroke="#33203c" stroke-width="0.5" />
<path d="M545 276.6 L633 276.6 L632 282.6 L626 283.2 L624 286.2 L588 286.4 L585 283.6 L552 283.8 Q545.6 281.6 545 276.6 Z" fill="#86203f" stroke="#33203c" stroke-width="0.5" />
<rect x="588" y="280.4" width="36" height="5.2" fill="#4a1838" />
<line x1="437" y1="280.4" x2="520" y2="280.4" stroke="#4a1030" stroke-width="0.5" />
<line x1="548" y1="280.2" x2="630" y2="280.2" stroke="#4a1030" stroke-width="0.5" />
<rect x="435.4" y="275.6" width="1.2" height="9.6" fill="#2a2230" />
<line x1="430.8" y1="194" x2="430.8" y2="276" stroke="#9aa6c0" stroke-width="0.5" />
</g>
<rect x="403" y="99" width="75.4" height="215" fill="#4a6ec8" opacity="0.16" />
<line x1="286.2" y1="99.1" x2="478.4" y2="99.1" stroke="#3a66d8" stroke-width="0.7" stroke-dasharray="1.6 1.4" opacity="0.85"/>
<line x1="286.3" y1="99.4" x2="286.3" y2="313" stroke="#3f6fe0" stroke-width="0.8" stroke-dasharray="0.9 2.3" opacity="0.9"/>
<line x1="290.5" y1="99.4" x2="290.5" y2="313" stroke="#3f6fe0" stroke-width="0.8" stroke-dasharray="0.9 2.3" opacity="0.9"/>
<line x1="304" y1="99.4" x2="304" y2="313" stroke="#3f6fe0" stroke-width="0.8" stroke-dasharray="0.9 2.3" opacity="0.9"/>
<line x1="325.6" y1="99.4" x2="325.6" y2="313" stroke="#3f6fe0" stroke-width="0.8" stroke-dasharray="0.9 2.3" opacity="0.9"/>
<line x1="352.3" y1="99.4" x2="352.3" y2="313" stroke="#3f6fe0" stroke-width="0.8" stroke-dasharray="0.9 2.3" opacity="0.9"/>
<line x1="411.8" y1="99.4" x2="411.8" y2="313" stroke="#3f6fe0" stroke-width="0.8" stroke-dasharray="0.9 2.3" opacity="0.9"/>
<line x1="438.8" y1="99.4" x2="438.8" y2="313" stroke="#3f6fe0" stroke-width="0.8" stroke-dasharray="0.9 2.3" opacity="0.9"/>
<line x1="460.2" y1="99.4" x2="460.2" y2="313" stroke="#3f6fe0" stroke-width="0.8" stroke-dasharray="0.9 2.3" opacity="0.9"/>
<line x1="473.6" y1="99.4" x2="473.6" y2="313" stroke="#3f6fe0" stroke-width="0.8" stroke-dasharray="0.9 2.3" opacity="0.9"/>
<line x1="478.3" y1="99.4" x2="478.3" y2="313" stroke="#3f6fe0" stroke-width="0.8" stroke-dasharray="0.9 2.3" opacity="0.9"/>
<line x1="363" y1="99.4" x2="363" y2="313" stroke="#2fdc62" stroke-width="0.9" stroke-dasharray="0.9 2.3"/>
<line x1="366.7" y1="99.4" x2="366.7" y2="313" stroke="#2fdc62" stroke-width="0.9" stroke-dasharray="0.9 2.3"/>
<line x1="370.7" y1="99.4" x2="370.7" y2="313" stroke="#2fdc62" stroke-width="0.9" stroke-dasharray="0.9 2.3"/>
<line x1="376.1" y1="99.4" x2="376.1" y2="313" stroke="#2fdc62" stroke-width="0.9" stroke-dasharray="0.9 2.3"/>
<line x1="382.2" y1="99.4" x2="382.2" y2="313" stroke="#2fdc62" stroke-width="0.9" stroke-dasharray="0.9 2.3"/>
<line x1="388.2" y1="99.4" x2="388.2" y2="313" stroke="#2fdc62" stroke-width="0.9" stroke-dasharray="0.9 2.3"/>
<line x1="393.5" y1="99.4" x2="393.5" y2="313" stroke="#2fdc62" stroke-width="0.9" stroke-dasharray="0.9 2.3"/>
<line x1="397.7" y1="99.4" x2="397.7" y2="313" stroke="#2fdc62" stroke-width="0.9" stroke-dasharray="0.9 2.3"/>
<line x1="401" y1="99.4" x2="401" y2="313" stroke="#2fdc62" stroke-width="0.9" stroke-dasharray="0.9 2.3"/>
<line x1="362.6" y1="99.2" x2="401.4" y2="99.2" stroke="#2fc860" stroke-width="0.7" stroke-dasharray="0.9 2.1"/>
</g>
<rect x="381.3" y="78" width="2" height="21" fill="#1c1cf0" />
<polygon points="382.3,68.4 379.7,79 384.9,79" fill="#2a2af8" />
<text x="382.3" y="67.31" font-size="6.8" fill="#ffffff" textLength="4.8" lengthAdjust="spacingAndGlyphs">N</text>
<line x1="271.9" y1="302.4" x2="271.9" y2="283.6" stroke="#2a2ad8" stroke-width="0.7" />
<polygon points="271.9,281.4 270.7,286.4 273.1,286.4" fill="#3a3ae0" />
<line x1="271.9" y1="306.2" x2="251" y2="306.2" stroke="#20d040" stroke-width="0.8" />
<polygon points="248.4,306.2 253.2,305 253.2,307.4" fill="#20d040" />
<circle cx="255.4" cy="306.2" r="1" fill="none" stroke="#20d040" stroke-width="0.5"/>
<circle cx="271.9" cy="306.2" r="1.1" fill="#e03030"/>
<text x="271.9" y="277.24" font-size="6" fill="#f4f4f4" textLength="4.2" lengthAdjust="spacingAndGlyphs">Z</text>
<text x="244.2" y="305.24" font-size="6" fill="#f4f4f4" textLength="4.2" lengthAdjust="spacingAndGlyphs">Y</text>
<text x="273.4" y="305.24" font-size="6" fill="#f4f4f4" textLength="4.2" lengthAdjust="spacingAndGlyphs">X</text>
<text x="724.2" y="54.55" font-size="7.5" fill="#ffffff" textLength="70" lengthAdjust="spacingAndGlyphs">Model Info: Untitled*</text>
</g>
<rect x="239.6" y="46" width="557" height="267.2" fill="none" stroke="#5edfe2" stroke-width="0.9" />
<rect x="227.75" y="316.6" width="0.9" height="0.9" fill="#7a7a7a" />
<rect x="227.75" y="318.8" width="0.9" height="0.9" fill="#7a7a7a" />
<rect x="227.75" y="321" width="0.9" height="0.9" fill="#7a7a7a" />
<rect x="227.75" y="323.2" width="0.9" height="0.9" fill="#7a7a7a" />
<rect x="227.75" y="325.4" width="0.9" height="0.9" fill="#7a7a7a" />
<path d="M232 318.0h3.4v2.4h-3.4z M237.4 318.0h3.4v2.4h-3.4z M232 322.8h3.4v2.4h-3.4z M237.4 322.8h3.4v2.4h-3.4z" fill="#5a78d0" />
<path d="M233.4 320.6L239.4 323.6M239.4 320.6L233.4 323.6" fill="none" stroke="#8aa0e0" stroke-width="0.9" />
<polygon points="242.9,321.55 245.5,321.55 244.2,323.11" fill="#222" />
<rect x="249.75" y="316.6" width="0.9" height="0.9" fill="#7a7a7a" />
<rect x="249.75" y="318.8" width="0.9" height="0.9" fill="#7a7a7a" />
<rect x="249.75" y="321" width="0.9" height="0.9" fill="#7a7a7a" />
<rect x="249.75" y="323.2" width="0.9" height="0.9" fill="#7a7a7a" />
<rect x="249.75" y="325.4" width="0.9" height="0.9" fill="#7a7a7a" />
<path d="M253.6 317.20000000000005h2.6l0.8 0.9h3.6v5.4h-7z" fill="#f4d684" stroke="#d8a848" stroke-width="0.4" />
<ellipse cx="257.072" cy="325.1" rx="2.024" ry="1.496" fill="#2238c8"/>
<ellipse cx="260.68" cy="325.3" rx="1.936" ry="1.408" fill="#d88a18"/>
<ellipse cx="258.832" cy="323.2" rx="1.936" ry="1.408" fill="#22a832"/>
<path d="M265.6 317.20000000000005h2.6l0.8 0.9h3.6v5.4h-7z" fill="#f4d684" stroke="#d8a848" stroke-width="0.4" />
<ellipse cx="270.6" cy="324.2" rx="4" ry="2.2" fill="#1c2ab8"/>
<ellipse cx="270.6" cy="323.2" rx="4" ry="2.2" fill="#3a58e8"/>
<path d="M277.2 317.20000000000005h2.6l0.8 0.9h3.6v5.4h-7z" fill="#f4d684" stroke="#d8a848" stroke-width="0.4" />
<rect x="281" y="320.2" width="4.6" height="5.8" fill="#f6f6f8" stroke="#666" stroke-width="0.4" />
<path d="M281.8 319.8q2.4 -1.8 3.8 0.6" fill="none" stroke="#e02020" stroke-width="0.8" />
<text x="282.2" y="324.82" font-size="3.6" fill="#333">1</text>
<path d="M289.2 317.20000000000005h2.6l0.8 0.9h3.6v5.4h-7z" fill="#f4d684" stroke="#d8a848" stroke-width="0.4" />
<polygon points="291,322.6 294,320.8 298.6,322.2 298.6,324.6 295.6,326.2 291,324.8" fill="#66666c" stroke="#333" stroke-width="0.3" />
<path d="M300.6 317.20000000000005h2.6l0.8 0.9h3.6v5.4h-7z" fill="#f4d684" stroke="#d8a848" stroke-width="0.4" />
<path d="M304.4 317.6v5.6" fill="none" stroke="#d81818" stroke-width="1.3" />
<polygon points="302.4,322.8 306.4,322.8 304.4,325.4" fill="#d81818" />
<rect x="306.6" y="323.4" width="3" height="2.8" fill="#28a038" />
<path d="M312.2 317.20000000000005h2.6l0.8 0.9h3.6v5.4h-7z" fill="#f4d684" stroke="#d8a848" stroke-width="0.4" />
<path d="M316 319.6V324.0L319.6 325.6" fill="none" stroke="#3a3ac0" stroke-width="0.7" />
<rect x="318.4" y="323.4" width="3" height="2.8" fill="#28a038" />
<polygon points="323.3,321.55 325.9,321.55 324.6,323.11" fill="#222" />
<line x1="329.6" y1="316.4" x2="329.6" y2="327" stroke="#a8a8a8" stroke-width="0.6" />
<path d="M335.4 318.20000000000005L341.6 325.0M341.6 318.20000000000005L335.4 325.0" fill="none" stroke="#e01c1c" stroke-width="2" />
<polygon points="345.6,321.6 349.6,318.4 355,320.2 355,323.4 351,325.8 345.6,324.2" fill="#8c8c90" stroke="#4a4a50" stroke-width="0.4" />
<path d="M345.6 321.6L351 323.0L355 320.20000000000005M351 323.0V325.8" fill="none" stroke="#55555a" stroke-width="0.4" />
<path d="M357.6 318.3h3.44l1 1h4.159999999999999v5.4h-8.6z" fill="url(#fold)" stroke="#c8922a" stroke-width="0.4" />
<polygon points="358.4,321 362.4,322.2 361,323 364.6,324.6 363.6,325.6 360,324 359,325" fill="#e02020" />
<line x1="373.6" y1="317.2" x2="373.6" y2="326" stroke="#3a3a3a" stroke-width="0.8" />
<path d="M371 319.0L373.6 322.0L376.4 319.0" fill="none" stroke="#d02020" stroke-width="0.9" />
<circle cx="371" cy="318.8" r="0.8" fill="#d02020"/>
<circle cx="376.4" cy="318.8" r="0.8" fill="#d02020"/>
<rect x="382.75" y="316.6" width="0.9" height="0.9" fill="#7a7a7a" />
<rect x="382.75" y="318.8" width="0.9" height="0.9" fill="#7a7a7a" />
<rect x="382.75" y="321" width="0.9" height="0.9" fill="#7a7a7a" />
<rect x="382.75" y="323.2" width="0.9" height="0.9" fill="#7a7a7a" />
<rect x="382.75" y="325.4" width="0.9" height="0.9" fill="#7a7a7a" />
<rect x="385" y="316.6" width="45.6" height="10" fill="#ffffff" />
<rect x="423.6" y="316.6" width="7" height="10" fill="#f4f4f4" />
<path d="M386.6 321.8q2.4 -4.6 6.2 -2l-1 2.2q-2.2 -1.6 -3.6 1.2z" fill="#5a5cb8" />
<rect x="386.6" y="324" width="1.3" height="1.4" fill="#e02020" />
<rect x="387.9" y="324" width="1.3" height="1.4" fill="#e0c020" />
<rect x="389.2" y="324" width="1.3" height="1.4" fill="#20b020" />
<rect x="390.5" y="324" width="1.3" height="1.4" fill="#2020e0" />
<rect x="391.8" y="324" width="1.3" height="1.4" fill="#c020c0" />
<text x="394.6" y="323.77" font-size="5.8" fill="#222" textLength="11" lengthAdjust="spacingAndGlyphs">Auto</text>
<polygon points="426.1,321.55 428.7,321.55 427.4,323.11" fill="#222" />
<path d="M433.4 321.20000000000005q1 -3.8 5.4 -2.8q3 0.8 3.2 3.2l-2 -0.6 -1.2 2.6 -1.6 -2.2z" fill="#fafafa" stroke="#6a6a7a" stroke-width="0.6" />
<polygon points="443.9,321.55 446.5,321.55 445.2,323.11" fill="#222" />
<path d="M448.6 321.0q1.4 -3.4 5.2 -2.6q3.4 1 4.2 4.2l-2.6 -0.2 -1.4 2.8 -3 -3.2z" fill="#5a5cac" stroke="#2a2c6a" stroke-width="0.5" />
<polygon points="459.9,321.55 462.5,321.55 461.2,323.11" fill="#222" />
<polygon points="464.6,319.8 469,317.4 473.6,319.4 473.6,324 469.4,326 464.6,324.2" fill="#a8aadc" stroke="#2a2c6a" stroke-width="0.5" />
<path d="M464.6 319.8L469.4 321.6L473.6 319.40000000000003M469.4 321.6V326.0" fill="none" stroke="#2a2c6a" stroke-width="0.5" />
<polygon points="464.6,319.8 469,317.4 473.6,319.4 469.4,321.6" fill="#d8dafa" />
<line x1="477.6" y1="316.4" x2="477.6" y2="327" stroke="#a8a8a8" stroke-width="0.6" />
<rect x="479.8" y="316.6" width="48" height="10" fill="#ffffff" />
<rect x="521.4" y="316.6" width="6.4" height="10" fill="#f4f4f4" />
<polygon points="481.2,319.4 484.6,317.6 488,319.2 488,322.6 484.6,324.2 481.2,322.8" fill="#3a3c8a" stroke="#1a1c4a" stroke-width="0.4" />
<polygon points="481.2,319.4 484.6,317.6 488,319.2 484.6,320.8" fill="#6a6cc0" />
<rect x="481.4" y="324.6" width="1.3" height="1.3" fill="#e02020" />
<rect x="482.7" y="324.6" width="1.3" height="1.3" fill="#e0c020" />
<rect x="484" y="324.6" width="1.3" height="1.3" fill="#20b020" />
<rect x="485.3" y="324.6" width="1.3" height="1.3" fill="#2020e0" />
<rect x="486.6" y="324.6" width="1.3" height="1.3" fill="#c020c0" />
<text x="490.2" y="323.77" font-size="5.8" fill="#222" textLength="21.4" lengthAdjust="spacingAndGlyphs">By Comp</text>
<polygon points="524.1,321.55 526.7,321.55 525.4,323.11" fill="#222" />
<polygon points="530.6,319.4 535.2,317 540,319.4 540,324 535.4,326.4 530.6,324" fill="#f8f8f8" stroke="#7a7a84" stroke-width="0.5" />
<path d="M530.6 319.40000000000003L535.4 321.8L540.0 319.40000000000003M535.4 321.8V326.40000000000003M533.0 318.20000000000005L537.8000000000001 320.6V325.20000000000005M537.6 318.20000000000005L533.0 320.6V325.20000000000005M530.6 321.6L535.4 324.0L540.0 321.6" fill="none" stroke="#7a7a84" stroke-width="0.35" />
<polygon points="541.9,321.55 544.5,321.55 543.2,323.11" fill="#222" />
<polygon points="546.6,319.4 551.2,317 556,319.4 556,324 551.4,326.4 546.6,324" fill="#4a4c98" stroke="#22244e" stroke-width="0.5" />
<path d="M546.6 319.40000000000003L551.4 321.8L556.0 319.40000000000003M551.4 321.8V326.40000000000003M549.0 318.20000000000005L553.8000000000001 320.6V325.20000000000005M553.6 318.20000000000005L549.0 320.6V325.20000000000005M546.6 321.6L551.4 324.0L556.0 321.6" fill="none" stroke="#22244e" stroke-width="0.35" />
<polygon points="557.9,321.55 560.5,321.55 559.2,323.11" fill="#222" />
<line x1="564.4" y1="323.6" x2="570.4" y2="319.8" stroke="#4a4a4a" stroke-width="0.8" />
<polygon points="573.3,321.55 575.9,321.55 574.6,323.11" fill="#222" />
<polygon points="578.6,321.8 583,319.4 587.6,321.8 583,324.2" fill="#6e6e72" stroke="#444" stroke-width="0.4" />
<polygon points="589.5,321.55 592.1,321.55 590.8,323.11" fill="#222" />
<polygon points="594,321.8 598.8,319 603.6,321.8 598.8,324.6" fill="#8a9af0" stroke="#1a2290" stroke-width="0.7" />
<polygon points="594,321.8 598.8,324.6 603.6,321.8 603.6,322.8 598.8,325.6 594,322.8" fill="#1a2290" />
<polygon points="605.5,321.55 608.1,321.55 606.8,323.11" fill="#222" />
<rect x="611.6" y="322.8" width="2.4" height="2" fill="#4a4cb0" />
<rect x="614.8" y="321" width="2.4" height="2" fill="#4a4cb0" />
<rect x="612.4" y="318.6" width="2.4" height="2" fill="#4a4cb0" />
<rect x="615.6" y="317.8" width="2.4" height="2" fill="#4a4cb0" />
<rect x="611.8" y="325.2" width="2.4" height="2" fill="#4a4cb0" />
<rect x="622.6" y="317.4" width="8.4" height="6.4" fill="#3a78d0" stroke="#1a2a6a" stroke-width="0.6" />
<rect x="625.8" y="324" width="2" height="1.6" fill="#333" />
<rect x="624.2" y="325.4" width="5.2" height="0.8" fill="#333" />
<rect x="635.75" y="316.6" width="0.9" height="0.9" fill="#7a7a7a" />
<rect x="635.75" y="318.8" width="0.9" height="0.9" fill="#7a7a7a" />
<rect x="635.75" y="321" width="0.9" height="0.9" fill="#7a7a7a" />
<rect x="635.75" y="323.2" width="0.9" height="0.9" fill="#7a7a7a" />
<rect x="635.75" y="325.4" width="0.9" height="0.9" fill="#7a7a7a" />
<polygon points="644.4,317.4 645.517,320.263 648.585,320.44 646.207,322.387 646.986,325.36 644.4,323.7 641.814,325.36 642.593,322.387 640.215,320.44 643.283,320.263" fill="#f4c010" stroke="#a87808" stroke-width="0.5" />
<rect x="653.75" y="316.6" width="0.9" height="0.9" fill="#7a7a7a" />
<rect x="653.75" y="318.8" width="0.9" height="0.9" fill="#7a7a7a" />
<rect x="653.75" y="321" width="0.9" height="0.9" fill="#7a7a7a" />
<rect x="653.75" y="323.2" width="0.9" height="0.9" fill="#7a7a7a" />
<rect x="653.75" y="325.4" width="0.9" height="0.9" fill="#7a7a7a" />
<polygon points="658,319 666.6,317.2 666.6,324.4 658,326" fill="#3a3c90" stroke="#1e2060" stroke-width="0.4" />
<path d="M658 321.40000000000003L666.6 319.6M658 323.8L666.6 322.0M660.8 318.40000000000003V325.40000000000003M663.8 317.8V324.8" fill="none" stroke="#b8baf0" stroke-width="0.5" />
<polygon points="668.9,321.55 671.5,321.55 670.2,323.11" fill="#222" />
<path d="M674.4 325.0L681 319.0" fill="none" stroke="#9a9aa0" stroke-width="2.2" />
<path d="M674.4 325.0L681 319.0" fill="none" stroke="#e8e8ec" stroke-width="1" />
<circle cx="681.6" cy="318.6" r="1.6" fill="#e8e8ec" stroke="#8a8a90" stroke-width="0.5"/>
<circle cx="674.2" cy="325" r="1.4" fill="#e8e8ec" stroke="#8a8a90" stroke-width="0.5"/>
<line x1="686.6" y1="316.4" x2="686.6" y2="327" stroke="#a8a8a8" stroke-width="0.6" />
<polygon points="692,321.6 696,317.6 696,319.8 699.6,319.8 699.6,323.4 696,323.4 696,325.6" fill="#6a6cc0" stroke="#3a3c8a" stroke-width="0.4" />
<polygon points="711.2,321.6 707.2,317.6 707.2,319.8 703.6,319.8 703.6,323.4 707.2,323.4 707.2,325.6" fill="#6a6cc0" stroke="#3a3c8a" stroke-width="0.4" />
<path d="M715.8 324.0q0.4 -5.6 7.4 -3.2" fill="none" stroke="#8a8cd8" stroke-width="1.6" />
<polygon points="715,321.8 718.6,322.6 715.6,325.4" fill="#8a8cd8" />
<line x1="728" y1="316.4" x2="728" y2="327" stroke="#a8a8a8" stroke-width="0.6" />
<rect x="733.6" y="321.1" width="6" height="1.3" fill="#3a3c9a" />
<rect x="745.4" y="321.1" width="5.8" height="1.3" fill="#3a3c9a" />
<rect x="747.7" y="318.8" width="1.3" height="5.8" fill="#3a3c9a" />
<path d="M756.4 324.0q0.4 -5.6 7.4 -3.2" fill="none" stroke="#8a8cd8" stroke-width="1.6" />
<polygon points="755.6,321.8 759.2,322.6 756.2,325.4" fill="#8a8cd8" />
<line x1="225" y1="331.6" x2="796.6" y2="331.6" stroke="#d8d8d8" stroke-width="0.8" />
<line x1="224.8" y1="331.6" x2="224.8" y2="418.4" stroke="#d0d0d0" stroke-width="0.6" />
<rect x="225.4" y="340.9" width="103" height="9.55" fill="#f1f1f1" />
<line x1="225.4" y1="341.1" x2="328.2" y2="341.1" stroke="#ffffff" stroke-width="0.6" />
<line x1="225.4" y1="350.65" x2="328.6" y2="350.65" stroke="#8a8a8a" stroke-width="0.9" />
<line x1="328.3" y1="340.9" x2="328.3" y2="350.95" stroke="#8a8a8a" stroke-width="0.9" />
<text x="276.9" y="348.28" font-size="7.6" fill="#1a1a1a" text-anchor="middle" textLength="20.6" lengthAdjust="spacingAndGlyphs">nodes</text>
<rect x="225.4" y="351.35" width="103" height="9.55" fill="#f1f1f1" />
<line x1="225.4" y1="351.55" x2="328.2" y2="351.55" stroke="#ffffff" stroke-width="0.6" />
<line x1="225.4" y1="361.1" x2="328.6" y2="361.1" stroke="#8a8a8a" stroke-width="0.9" />
<line x1="328.3" y1="351.35" x2="328.3" y2="361.4" stroke="#8a8a8a" stroke-width="0.9" />
<text x="276.9" y="358.73" font-size="7.6" fill="#1a1a1a" text-anchor="middle" textLength="31" lengthAdjust="spacingAndGlyphs">node edit</text>
<rect x="225.4" y="361.8" width="103" height="9.55" fill="#f1f1f1" />
<line x1="225.4" y1="362" x2="328.2" y2="362" stroke="#ffffff" stroke-width="0.6" />
<line x1="225.4" y1="371.55" x2="328.6" y2="371.55" stroke="#8a8a8a" stroke-width="0.9" />
<line x1="328.3" y1="361.8" x2="328.3" y2="371.85" stroke="#8a8a8a" stroke-width="0.9" />
<text x="276.9" y="369.18" font-size="7.6" fill="#1a1a1a" text-anchor="middle" textLength="39.4" lengthAdjust="spacingAndGlyphs">temp nodes</text>
<rect x="225.4" y="372.25" width="103" height="9.55" fill="#f1f1f1" />
<line x1="225.4" y1="372.45" x2="328.2" y2="372.45" stroke="#ffffff" stroke-width="0.6" />
<line x1="225.4" y1="382" x2="328.6" y2="382" stroke="#8a8a8a" stroke-width="0.9" />
<line x1="328.3" y1="372.25" x2="328.3" y2="382.3" stroke="#8a8a8a" stroke-width="0.9" />
<text x="276.9" y="379.63" font-size="7.6" fill="#1a1a1a" text-anchor="middle" textLength="28.4" lengthAdjust="spacingAndGlyphs">distance</text>
<rect x="225.4" y="382.7" width="103" height="9.55" fill="#f1f1f1" />
<line x1="225.4" y1="382.9" x2="328.2" y2="382.9" stroke="#ffffff" stroke-width="0.6" />
<line x1="225.4" y1="392.45" x2="328.6" y2="392.45" stroke="#8a8a8a" stroke-width="0.9" />
<line x1="328.3" y1="382.7" x2="328.3" y2="392.75" stroke="#8a8a8a" stroke-width="0.9" />
<text x="276.9" y="390.08" font-size="7.6" fill="#1a1a1a" text-anchor="middle" textLength="20.6" lengthAdjust="spacingAndGlyphs">points</text>
<rect x="329" y="340.9" width="102.6" height="9.55" fill="#f1f1f1" />
<line x1="329" y1="341.1" x2="431.4" y2="341.1" stroke="#ffffff" stroke-width="0.6" />
<line x1="329" y1="350.65" x2="431.8" y2="350.65" stroke="#8a8a8a" stroke-width="0.9" />
<line x1="431.5" y1="340.9" x2="431.5" y2="350.95" stroke="#8a8a8a" stroke-width="0.9" />
<text x="380.3" y="348.28" font-size="7.6" fill="#1a1a1a" text-anchor="middle" textLength="15.6" lengthAdjust="spacingAndGlyphs">lines</text>
<rect x="329" y="351.35" width="102.6" height="9.55" fill="#f1f1f1" />
<line x1="329" y1="351.55" x2="431.4" y2="351.55" stroke="#ffffff" stroke-width="0.6" />
<line x1="329" y1="361.1" x2="431.8" y2="361.1" stroke="#8a8a8a" stroke-width="0.9" />
<line x1="431.5" y1="351.35" x2="431.5" y2="361.4" stroke="#8a8a8a" stroke-width="0.9" />
<text x="380.3" y="358.73" font-size="7.6" fill="#1a1a1a" text-anchor="middle" textLength="26.4" lengthAdjust="spacingAndGlyphs">line edit</text>
<rect x="329" y="361.8" width="102.6" height="9.55" fill="#f1f1f1" />
<line x1="329" y1="362" x2="431.4" y2="362" stroke="#ffffff" stroke-width="0.6" />
<line x1="329" y1="371.55" x2="431.8" y2="371.55" stroke="#8a8a8a" stroke-width="0.9" />
<line x1="431.5" y1="361.8" x2="431.5" y2="371.85" stroke="#8a8a8a" stroke-width="0.9" />
<text x="380.3" y="369.18" font-size="7.6" fill="#1a1a1a" text-anchor="middle" textLength="21.6" lengthAdjust="spacingAndGlyphs">length</text>
<rect x="432.2" y="340.9" width="102.2" height="9.55" fill="#f1f1f1" />
<line x1="432.2" y1="341.1" x2="534.2" y2="341.1" stroke="#ffffff" stroke-width="0.6" />
<line x1="432.2" y1="350.65" x2="534.6" y2="350.65" stroke="#8a8a8a" stroke-width="0.9" />
<line x1="534.3" y1="340.9" x2="534.3" y2="350.95" stroke="#8a8a8a" stroke-width="0.9" />
<text x="483.3" y="348.28" font-size="7.6" fill="#1a1a1a" text-anchor="middle" textLength="29" lengthAdjust="spacingAndGlyphs">surfaces</text>
<rect x="432.2" y="351.35" width="102.2" height="9.55" fill="#f1f1f1" />
<line x1="432.2" y1="351.55" x2="534.2" y2="351.55" stroke="#ffffff" stroke-width="0.6" />
<line x1="432.2" y1="361.1" x2="534.6" y2="361.1" stroke="#8a8a8a" stroke-width="0.9" />
<line x1="534.3" y1="351.35" x2="534.3" y2="361.4" stroke="#8a8a8a" stroke-width="0.9" />
<text x="483.3" y="358.73" font-size="7.6" fill="#1a1a1a" text-anchor="middle" textLength="39.4" lengthAdjust="spacingAndGlyphs">surface edit</text>
<rect x="432.2" y="361.8" width="102.2" height="9.55" fill="#f1f1f1" />
<line x1="432.2" y1="362" x2="534.2" y2="362" stroke="#ffffff" stroke-width="0.6" />
<line x1="432.2" y1="371.55" x2="534.6" y2="371.55" stroke="#8a8a8a" stroke-width="0.9" />
<line x1="534.3" y1="361.8" x2="534.3" y2="371.85" stroke="#8a8a8a" stroke-width="0.9" />
<text x="483.3" y="369.18" font-size="7.6" fill="#1a1a1a" text-anchor="middle" textLength="33.6" lengthAdjust="spacingAndGlyphs">defeature</text>
<rect x="432.2" y="372.25" width="102.2" height="9.55" fill="#f1f1f1" />
<line x1="432.2" y1="372.45" x2="534.2" y2="372.45" stroke="#ffffff" stroke-width="0.6" />
<line x1="432.2" y1="382" x2="534.6" y2="382" stroke="#8a8a8a" stroke-width="0.9" />
<line x1="534.3" y1="372.25" x2="534.3" y2="382.3" stroke="#8a8a8a" stroke-width="0.9" />
<text x="483.3" y="379.63" font-size="7.6" fill="#1a1a1a" text-anchor="middle" textLength="37.4" lengthAdjust="spacingAndGlyphs">midsurface</text>
<rect x="432.2" y="382.7" width="102.2" height="9.55" fill="#f1f1f1" />
<line x1="432.2" y1="382.9" x2="534.2" y2="382.9" stroke="#ffffff" stroke-width="0.6" />
<line x1="432.2" y1="392.45" x2="534.6" y2="392.45" stroke="#8a8a8a" stroke-width="0.9" />
<line x1="534.3" y1="382.7" x2="534.3" y2="392.75" stroke="#8a8a8a" stroke-width="0.9" />
<text x="483.3" y="390.08" font-size="7.6" fill="#1a1a1a" text-anchor="middle" textLength="45.6" lengthAdjust="spacingAndGlyphs">dimensioning</text>
<rect x="535" y="340.9" width="102" height="9.55" fill="#f1f1f1" />
<line x1="535" y1="341.1" x2="636.8" y2="341.1" stroke="#ffffff" stroke-width="0.6" />
<line x1="535" y1="350.65" x2="637.2" y2="350.65" stroke="#8a8a8a" stroke-width="0.9" />
<line x1="636.9" y1="340.9" x2="636.9" y2="350.95" stroke="#8a8a8a" stroke-width="0.9" />
<text x="586" y="348.28" font-size="7.6" fill="#1a1a1a" text-anchor="middle" textLength="18.6" lengthAdjust="spacingAndGlyphs">solids</text>
<rect x="535" y="351.35" width="102" height="9.55" fill="#f1f1f1" />
<line x1="535" y1="351.55" x2="636.8" y2="351.55" stroke="#ffffff" stroke-width="0.6" />
<line x1="535" y1="361.1" x2="637.2" y2="361.1" stroke="#8a8a8a" stroke-width="0.9" />
<line x1="636.9" y1="351.35" x2="636.9" y2="361.4" stroke="#8a8a8a" stroke-width="0.9" />
<text x="586" y="358.73" font-size="7.6" fill="#1a1a1a" text-anchor="middle" textLength="29.4" lengthAdjust="spacingAndGlyphs">solid edit</text>
<rect x="535" y="361.8" width="102" height="9.55" fill="#f1f1f1" />
<line x1="535" y1="362" x2="636.8" y2="362" stroke="#ffffff" stroke-width="0.6" />
<line x1="535" y1="371.55" x2="637.2" y2="371.55" stroke="#8a8a8a" stroke-width="0.9" />
<line x1="636.9" y1="361.8" x2="636.9" y2="371.85" stroke="#8a8a8a" stroke-width="0.9" />
<text x="586" y="369.18" font-size="7.6" fill="#1a1a1a" text-anchor="middle" textLength="11.6" lengthAdjust="spacingAndGlyphs">ribs</text>
<rect x="637.6" y="340.9" width="102.4" height="9.55" fill="#f1f1f1" />
<line x1="637.6" y1="341.1" x2="739.8" y2="341.1" stroke="#ffffff" stroke-width="0.6" />
<line x1="637.6" y1="350.65" x2="740.2" y2="350.65" stroke="#8a8a8a" stroke-width="0.9" />
<line x1="739.9" y1="340.9" x2="739.9" y2="350.95" stroke="#8a8a8a" stroke-width="0.9" />
<text x="688.8" y="348.28" font-size="7.6" fill="#1a1a1a" text-anchor="middle" textLength="32.4" lengthAdjust="spacingAndGlyphs">quick edit</text>
<rect x="637.6" y="351.35" width="102.4" height="9.55" fill="#f1f1f1" />
<line x1="637.6" y1="351.55" x2="739.8" y2="351.55" stroke="#ffffff" stroke-width="0.6" />
<line x1="637.6" y1="361.1" x2="740.2" y2="361.1" stroke="#8a8a8a" stroke-width="0.9" />
<line x1="739.9" y1="351.35" x2="739.9" y2="361.4" stroke="#8a8a8a" stroke-width="0.9" />
<text x="688.8" y="358.73" font-size="7.6" fill="#1a1a1a" text-anchor="middle" textLength="31.2" lengthAdjust="spacingAndGlyphs">edge edit</text>
<rect x="637.6" y="361.8" width="102.4" height="9.55" fill="#f1f1f1" />
<line x1="637.6" y1="362" x2="739.8" y2="362" stroke="#ffffff" stroke-width="0.6" />
<line x1="637.6" y1="371.55" x2="740.2" y2="371.55" stroke="#8a8a8a" stroke-width="0.9" />
<line x1="739.9" y1="361.8" x2="739.9" y2="371.85" stroke="#8a8a8a" stroke-width="0.9" />
<text x="688.8" y="369.18" font-size="7.6" fill="#1a1a1a" text-anchor="middle" textLength="32" lengthAdjust="spacingAndGlyphs">point edit</text>
<rect x="637.6" y="372.25" width="102.4" height="9.55" fill="#f1f1f1" />
<line x1="637.6" y1="372.45" x2="739.8" y2="372.45" stroke="#ffffff" stroke-width="0.6" />
<line x1="637.6" y1="382" x2="740.2" y2="382" stroke="#8a8a8a" stroke-width="0.9" />
<line x1="739.9" y1="372.25" x2="739.9" y2="382.3" stroke="#8a8a8a" stroke-width="0.9" />
<text x="688.8" y="379.63" font-size="7.6" fill="#1a1a1a" text-anchor="middle" textLength="43" lengthAdjust="spacingAndGlyphs">autocleanup</text>
<circle cx="748.8" cy="345.6" r="1.6" fill="#ffffff" stroke="#8a8a8a" stroke-width="0.5"/>
<path d="M747.5 346.7A1.7 1.7 0 0 1 749.9 344.2" fill="none" stroke="#3a3a3a" stroke-width="0.7" />
<circle cx="748.8" cy="345.6" r="0.8" fill="#111"/>
<text x="757.4" y="348.25" font-size="7.5" fill="#1a1a1a" textLength="20" lengthAdjust="spacingAndGlyphs">Geom</text>
<circle cx="748.8" cy="356.05" r="1.6" fill="#ffffff" stroke="#8a8a8a" stroke-width="0.5"/>
<path d="M747.5 357.15A1.7 1.7 0 0 1 749.9 354.65" fill="none" stroke="#3a3a3a" stroke-width="0.7" />
<text x="757.4" y="358.70" font-size="7.5" fill="#1a1a1a" textLength="8.6" lengthAdjust="spacingAndGlyphs">1D</text>
<circle cx="748.8" cy="366.5" r="1.6" fill="#ffffff" stroke="#8a8a8a" stroke-width="0.5"/>
<path d="M747.5 367.6A1.7 1.7 0 0 1 749.9 365.1" fill="none" stroke="#3a3a3a" stroke-width="0.7" />
<text x="757.4" y="369.15" font-size="7.5" fill="#1a1a1a" textLength="9" lengthAdjust="spacingAndGlyphs">2D</text>
<circle cx="748.8" cy="376.95" r="1.6" fill="#ffffff" stroke="#8a8a8a" stroke-width="0.5"/>
<path d="M747.5 378.05A1.7 1.7 0 0 1 749.9 375.55" fill="none" stroke="#3a3a3a" stroke-width="0.7" />
<text x="757.4" y="379.60" font-size="7.5" fill="#1a1a1a" textLength="9" lengthAdjust="spacingAndGlyphs">3D</text>
<circle cx="748.8" cy="387.4" r="1.6" fill="#ffffff" stroke="#8a8a8a" stroke-width="0.5"/>
<path d="M747.5 388.5A1.7 1.7 0 0 1 749.9 386" fill="none" stroke="#3a3a3a" stroke-width="0.7" />
<text x="757.4" y="390.05" font-size="7.5" fill="#1a1a1a" textLength="27.4" lengthAdjust="spacingAndGlyphs">Analysis</text>
<circle cx="748.8" cy="397.85" r="1.6" fill="#ffffff" stroke="#8a8a8a" stroke-width="0.5"/>
<path d="M747.5 398.95A1.7 1.7 0 0 1 749.9 396.45" fill="none" stroke="#3a3a3a" stroke-width="0.7" />
<text x="757.4" y="400.50" font-size="7.5" fill="#1a1a1a" textLength="14" lengthAdjust="spacingAndGlyphs">Tool</text>
<circle cx="748.8" cy="408.3" r="1.6" fill="#ffffff" stroke="#8a8a8a" stroke-width="0.5"/>
<path d="M747.5 409.4A1.7 1.7 0 0 1 749.9 406.9" fill="none" stroke="#3a3a3a" stroke-width="0.7" />
<text x="757.4" y="410.95" font-size="7.5" fill="#1a1a1a" textLength="14.4" lengthAdjust="spacingAndGlyphs">Post</text>
<path d="M224.8 418.5H795Q797.4 418.5 797.4 416" fill="none" stroke="#8e8e8e" stroke-width="0.9" />
<line x1="0" y1="418.6" x2="221" y2="418.6" stroke="#d8d8d8" stroke-width="0.5" />
<rect x="579.6" y="421.2" width="51.8" height="9.4" fill="#f4f4f4" />
<line x1="579.6" y1="421.2" x2="631.4" y2="421.2" stroke="#6a6a6a" stroke-width="0.9" />
<line x1="579.9" y1="421" x2="579.9" y2="430" stroke="#6a6a6a" stroke-width="0.9" />
<rect x="631.4" y="421.2" width="52.2" height="9.4" fill="#f4f4f4" />
<line x1="631.4" y1="421.2" x2="683.6" y2="421.2" stroke="#6a6a6a" stroke-width="0.9" />
<line x1="631.7" y1="421" x2="631.7" y2="430" stroke="#6a6a6a" stroke-width="0.9" />
<rect x="683.6" y="421.2" width="58.8" height="9.4" fill="#f4f4f4" />
<line x1="683.6" y1="421.2" x2="742.4" y2="421.2" stroke="#6a6a6a" stroke-width="0.9" />
<line x1="683.9" y1="421" x2="683.9" y2="430" stroke="#6a6a6a" stroke-width="0.9" />
<rect x="742.4" y="421.2" width="58.6" height="9.4" fill="#f4f4f4" />
<line x1="742.4" y1="421.2" x2="801" y2="421.2" stroke="#6a6a6a" stroke-width="0.9" />
<line x1="742.7" y1="421" x2="742.7" y2="430" stroke="#6a6a6a" stroke-width="0.9" />
<text x="633" y="427.50" font-size="5.6" fill="#333" textLength="16" lengthAdjust="spacingAndGlyphs">Model</text>
</svg>
</body>
</html>
